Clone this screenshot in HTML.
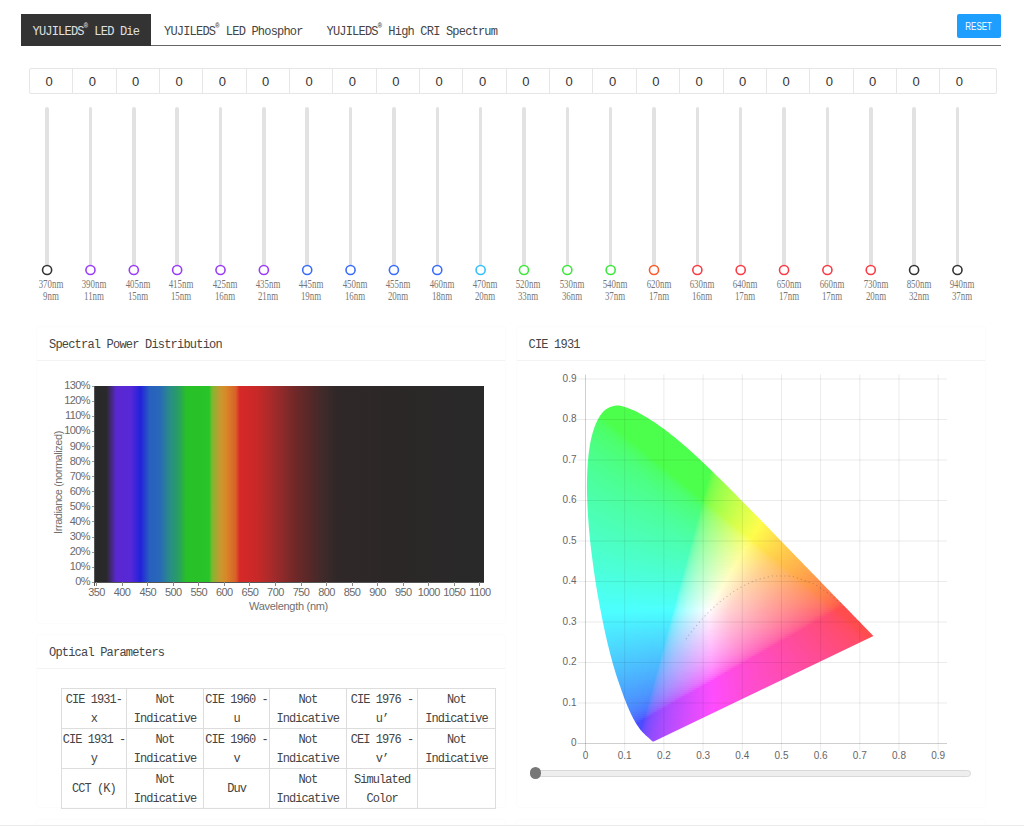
<!DOCTYPE html><html><head><meta charset="utf-8"><title>YUJILEDS</title><style>
*{margin:0;padding:0;box-sizing:border-box}
html,body{width:1024px;height:826px;overflow:hidden;background:#fff}
body{position:relative;font-family:"Liberation Sans",sans-serif;color:#333}
.a{position:absolute}
.m{font-family:"Liberation Mono",monospace;letter-spacing:-0.8px;font-size:12px;white-space:nowrap}
.card{position:absolute;background:#fff;border-radius:2px;box-shadow:0 0 2px rgba(0,0,0,.05)}
.card .hd{position:absolute;left:0;right:0;top:0;border-bottom:1px solid #f3f3f3}
.card .tt{position:absolute;left:12px;color:#444}
.cell{position:absolute;top:0;height:26px;border:1px solid #e6e6e6;font-size:12.5px;line-height:24px;color:#333;padding-left:16px}
.trk{position:absolute;top:107px;height:158px;width:3.5px;background:#e2e2e2;border-radius:2px 2px 0 0}
.th{position:absolute;top:264.7px;width:10.6px;height:10.6px;border-radius:50%;border:1.7px solid #333;background:#fff}
.lb{position:absolute;width:44px;text-align:center;font-family:"Liberation Serif",serif;font-size:11.5px;letter-spacing:0;transform:scaleX(.77);line-height:12px;color:#777;white-space:nowrap}
.yl{position:absolute;right:0;font-size:11px;letter-spacing:-0.6px;color:#6a6a6a;line-height:11px;text-align:right}
.xl{position:absolute;font-size:11px;letter-spacing:-0.6px;color:#6a6a6a;line-height:11px;width:40px;text-align:center}
table{border-collapse:collapse;position:absolute}
td{border:1px solid #ddd;font-family:"Liberation Mono",monospace;font-size:12px;letter-spacing:-0.95px;line-height:19.5px;text-align:center;color:#444;padding:0;white-space:nowrap}
</style></head><body>
<div class="a" style="left:21px;top:14px;width:130px;height:32px;background:#333"></div>
<div class="a" style="left:151px;top:45px;width:850px;height:1px;background:#666"></div>
<div class="a m" style="left:32.5px;top:24px;line-height:16px;color:#e0e0e0">YUJILEDS<sup style="font-size:7px;position:relative;top:-3px;vertical-align:top;letter-spacing:0;line-height:10px">&reg;</sup> LED Die</div>
<div class="a m" style="left:164.0px;top:24px;line-height:16px;color:#444">YUJILEDS<sup style="font-size:7px;position:relative;top:-3px;vertical-align:top;letter-spacing:0;line-height:10px">&reg;</sup> LED Phosphor</div>
<div class="a m" style="left:326.5px;top:24px;line-height:16px;color:#444">YUJILEDS<sup style="font-size:7px;position:relative;top:-3px;vertical-align:top;letter-spacing:0;line-height:10px">&reg;</sup> High CRI Spectrum</div>
<div class="a" style="left:957px;top:14px;width:44px;height:24px;background:#1e9fff;border-radius:2px;color:#fff;font-size:10px;line-height:26px;text-align:center"><span style="display:inline-block;transform:scaleX(.8)">RESET</span></div>
<div class="a" style="left:29px;top:68px;width:968px;height:26px;border:1px solid #e6e6e6;border-radius:2px"></div>
<div class="a" style="left:72.25px;top:69px;width:1px;height:24px;background:#e6e6e6"></div>
<div class="a" style="left:115.60px;top:69px;width:1px;height:24px;background:#e6e6e6"></div>
<div class="a" style="left:158.95px;top:69px;width:1px;height:24px;background:#e6e6e6"></div>
<div class="a" style="left:202.30px;top:69px;width:1px;height:24px;background:#e6e6e6"></div>
<div class="a" style="left:245.65px;top:69px;width:1px;height:24px;background:#e6e6e6"></div>
<div class="a" style="left:289.00px;top:69px;width:1px;height:24px;background:#e6e6e6"></div>
<div class="a" style="left:332.35px;top:69px;width:1px;height:24px;background:#e6e6e6"></div>
<div class="a" style="left:375.70px;top:69px;width:1px;height:24px;background:#e6e6e6"></div>
<div class="a" style="left:419.05px;top:69px;width:1px;height:24px;background:#e6e6e6"></div>
<div class="a" style="left:462.40px;top:69px;width:1px;height:24px;background:#e6e6e6"></div>
<div class="a" style="left:505.75px;top:69px;width:1px;height:24px;background:#e6e6e6"></div>
<div class="a" style="left:549.10px;top:69px;width:1px;height:24px;background:#e6e6e6"></div>
<div class="a" style="left:592.45px;top:69px;width:1px;height:24px;background:#e6e6e6"></div>
<div class="a" style="left:635.80px;top:69px;width:1px;height:24px;background:#e6e6e6"></div>
<div class="a" style="left:679.15px;top:69px;width:1px;height:24px;background:#e6e6e6"></div>
<div class="a" style="left:722.50px;top:69px;width:1px;height:24px;background:#e6e6e6"></div>
<div class="a" style="left:765.85px;top:69px;width:1px;height:24px;background:#e6e6e6"></div>
<div class="a" style="left:809.20px;top:69px;width:1px;height:24px;background:#e6e6e6"></div>
<div class="a" style="left:852.55px;top:69px;width:1px;height:24px;background:#e6e6e6"></div>
<div class="a" style="left:895.90px;top:69px;width:1px;height:24px;background:#e6e6e6"></div>
<div class="a" style="left:939.25px;top:69px;width:1px;height:24px;background:#e6e6e6"></div>
<div class="a" style="left:45.4px;top:69px;font-size:13px;line-height:25px;color:#333">0</div>
<div class="a" style="left:88.8px;top:69px;font-size:13px;line-height:25px;color:#333">0</div>
<div class="a" style="left:132.1px;top:69px;font-size:13px;line-height:25px;color:#333">0</div>
<div class="a" style="left:175.5px;top:69px;font-size:13px;line-height:25px;color:#333">0</div>
<div class="a" style="left:218.8px;top:69px;font-size:13px;line-height:25px;color:#333">0</div>
<div class="a" style="left:262.1px;top:69px;font-size:13px;line-height:25px;color:#333">0</div>
<div class="a" style="left:305.5px;top:69px;font-size:13px;line-height:25px;color:#333">0</div>
<div class="a" style="left:348.8px;top:69px;font-size:13px;line-height:25px;color:#333">0</div>
<div class="a" style="left:392.2px;top:69px;font-size:13px;line-height:25px;color:#333">0</div>
<div class="a" style="left:435.6px;top:69px;font-size:13px;line-height:25px;color:#333">0</div>
<div class="a" style="left:478.9px;top:69px;font-size:13px;line-height:25px;color:#333">0</div>
<div class="a" style="left:522.2px;top:69px;font-size:13px;line-height:25px;color:#333">0</div>
<div class="a" style="left:565.6px;top:69px;font-size:13px;line-height:25px;color:#333">0</div>
<div class="a" style="left:609.0px;top:69px;font-size:13px;line-height:25px;color:#333">0</div>
<div class="a" style="left:652.3px;top:69px;font-size:13px;line-height:25px;color:#333">0</div>
<div class="a" style="left:695.6px;top:69px;font-size:13px;line-height:25px;color:#333">0</div>
<div class="a" style="left:739.0px;top:69px;font-size:13px;line-height:25px;color:#333">0</div>
<div class="a" style="left:782.4px;top:69px;font-size:13px;line-height:25px;color:#333">0</div>
<div class="a" style="left:825.7px;top:69px;font-size:13px;line-height:25px;color:#333">0</div>
<div class="a" style="left:869.0px;top:69px;font-size:13px;line-height:25px;color:#333">0</div>
<div class="a" style="left:912.4px;top:69px;font-size:13px;line-height:25px;color:#333">0</div>
<div class="a" style="left:955.8px;top:69px;font-size:13px;line-height:25px;color:#333">0</div>
<div class="trk" style="left:45.35px"></div>
<div class="lb" style="left:29.0px;top:278.3px">370nm<br>9nm</div>
<div class="trk" style="left:88.70px"></div>
<div class="lb" style="left:72.4px;top:278.3px">390nm<br>11nm</div>
<div class="trk" style="left:132.05px"></div>
<div class="lb" style="left:115.8px;top:278.3px">405nm<br>15nm</div>
<div class="trk" style="left:175.40px"></div>
<div class="lb" style="left:159.2px;top:278.3px">415nm<br>15nm</div>
<div class="trk" style="left:218.75px"></div>
<div class="lb" style="left:202.6px;top:278.3px">425nm<br>16nm</div>
<div class="trk" style="left:262.10px"></div>
<div class="lb" style="left:246.0px;top:278.3px">435nm<br>21nm</div>
<div class="trk" style="left:305.45px"></div>
<div class="lb" style="left:289.4px;top:278.3px">445nm<br>19nm</div>
<div class="trk" style="left:348.80px"></div>
<div class="lb" style="left:332.8px;top:278.3px">450nm<br>16nm</div>
<div class="trk" style="left:392.15px"></div>
<div class="lb" style="left:376.2px;top:278.3px">455nm<br>20nm</div>
<div class="trk" style="left:435.50px"></div>
<div class="lb" style="left:419.6px;top:278.3px">460nm<br>18nm</div>
<div class="trk" style="left:478.85px"></div>
<div class="lb" style="left:463.0px;top:278.3px">470nm<br>20nm</div>
<div class="trk" style="left:522.20px"></div>
<div class="lb" style="left:506.4px;top:278.3px">520nm<br>33nm</div>
<div class="trk" style="left:565.55px"></div>
<div class="lb" style="left:549.8px;top:278.3px">530nm<br>36nm</div>
<div class="trk" style="left:608.90px"></div>
<div class="lb" style="left:593.2px;top:278.3px">540nm<br>37nm</div>
<div class="trk" style="left:652.25px"></div>
<div class="lb" style="left:636.6px;top:278.3px">620nm<br>17nm</div>
<div class="trk" style="left:695.60px"></div>
<div class="lb" style="left:680.0px;top:278.3px">630nm<br>16nm</div>
<div class="trk" style="left:738.95px"></div>
<div class="lb" style="left:723.4px;top:278.3px">640nm<br>17nm</div>
<div class="trk" style="left:782.30px"></div>
<div class="lb" style="left:766.8px;top:278.3px">650nm<br>17nm</div>
<div class="trk" style="left:825.65px"></div>
<div class="lb" style="left:810.2px;top:278.3px">660nm<br>17nm</div>
<div class="trk" style="left:869.00px"></div>
<div class="lb" style="left:853.6px;top:278.3px">730nm<br>20nm</div>
<div class="trk" style="left:912.35px"></div>
<div class="lb" style="left:897.0px;top:278.3px">850nm<br>32nm</div>
<div class="trk" style="left:955.70px"></div>
<div class="lb" style="left:940.4px;top:278.3px">940nm<br>37nm</div>
<svg class="a" style="left:0;top:0" width="1024" height="300"><circle cx="47.10" cy="270" r="4.55" fill="#fff" stroke="#333" stroke-width="1.6"/><circle cx="90.45" cy="270" r="4.55" fill="#fff" stroke="#9a3cf8" stroke-width="1.6"/><circle cx="133.80" cy="270" r="4.55" fill="#fff" stroke="#9a3cf8" stroke-width="1.6"/><circle cx="177.15" cy="270" r="4.55" fill="#fff" stroke="#9a3cf8" stroke-width="1.6"/><circle cx="220.50" cy="270" r="4.55" fill="#fff" stroke="#9a3cf8" stroke-width="1.6"/><circle cx="263.85" cy="270" r="4.55" fill="#fff" stroke="#9a3cf8" stroke-width="1.6"/><circle cx="307.20" cy="270" r="4.55" fill="#fff" stroke="#3a6cfc" stroke-width="1.6"/><circle cx="350.55" cy="270" r="4.55" fill="#fff" stroke="#3a6cfc" stroke-width="1.6"/><circle cx="393.90" cy="270" r="4.55" fill="#fff" stroke="#3a6cfc" stroke-width="1.6"/><circle cx="437.25" cy="270" r="4.55" fill="#fff" stroke="#3a6cfc" stroke-width="1.6"/><circle cx="480.60" cy="270" r="4.55" fill="#fff" stroke="#35c0fc" stroke-width="1.6"/><circle cx="523.95" cy="270" r="4.55" fill="#fff" stroke="#3ce83c" stroke-width="1.6"/><circle cx="567.30" cy="270" r="4.55" fill="#fff" stroke="#3ce83c" stroke-width="1.6"/><circle cx="610.65" cy="270" r="4.55" fill="#fff" stroke="#3ce83c" stroke-width="1.6"/><circle cx="654.00" cy="270" r="4.55" fill="#fff" stroke="#fc5a2a" stroke-width="1.6"/><circle cx="697.35" cy="270" r="4.55" fill="#fff" stroke="#fc3a44" stroke-width="1.6"/><circle cx="740.70" cy="270" r="4.55" fill="#fff" stroke="#fc3a44" stroke-width="1.6"/><circle cx="784.05" cy="270" r="4.55" fill="#fff" stroke="#fc3a44" stroke-width="1.6"/><circle cx="827.40" cy="270" r="4.55" fill="#fff" stroke="#fc3a44" stroke-width="1.6"/><circle cx="870.75" cy="270" r="4.55" fill="#fff" stroke="#fc3a44" stroke-width="1.6"/><circle cx="914.10" cy="270" r="4.55" fill="#fff" stroke="#333" stroke-width="1.6"/><circle cx="957.45" cy="270" r="4.55" fill="#fff" stroke="#333" stroke-width="1.6"/></svg>
<div class="card" style="left:37.0px;top:327.0px;width:467.5px;height:296.0px"><div class="hd" style="height:34.0px"></div><div class="tt m" style="top:10.3px;line-height:16px">Spectral Power Distribution</div></div>
<div class="card" style="left:37.0px;top:634.5px;width:467.5px;height:172.5px"><div class="hd" style="height:34.0px"></div><div class="tt m" style="top:10.0px;line-height:16px">Optical Parameters</div></div>
<div class="card" style="left:516.5px;top:327.0px;width:468.5px;height:479.5px"><div class="hd" style="height:33.5px"></div><div class="tt m" style="top:10.0px;line-height:16px">CIE 1931</div></div>
<div class="card" style="left:37.0px;top:819.5px;width:467.5px;height:80.5px"><div class="hd" style="height:30.5px"></div><div class="tt m" style="top:0.0px;line-height:16px"></div></div>
<div class="card" style="left:516.5px;top:819.5px;width:468.5px;height:80.5px"><div class="hd" style="height:30.5px"></div><div class="tt m" style="top:0.0px;line-height:16px"></div></div>
<div class="a" style="left:0;top:824.5px;width:1024px;height:2px;background:#eaeaea"></div>
<div class="a" style="left:94.4px;top:386.2px;width:389.4px;height:196.0px;background:linear-gradient(to right,#292929 0.0px,#292929 12.1px,#5a28d0 22.3px,#5828d8 36.3px,#2222d8 46.5px,#2860c0 55.6px,#2868b8 65.6px,#288c88 75.4px,#28a060 85.1px,#28c028 92.0px,#28c428 114.9px,#80b830 118.3px,#c89830 126.1px,#d88828 132.0px,#d86028 141.8px,#d82828 145.6px,#c82828 163.3px,#b02a2a 174.0px,#902a2a 187.6px,#702828 201.3px,#582828 215.0px,#402a2a 228.6px,#302828 242.3px,#2b2727 305.6px,#292929 389.4px)"></div>
<div class="a" style="left:94.4px;top:386.2px;width:1px;height:200.0px;background:#555"></div>
<div class="a" style="left:92.4px;top:582.2px;width:391.4px;height:1px;background:#555"></div>
<div class="a" style="left:40px;top:0;width:50px;height:826px">
<div class="yl" style="top:576.2px">0%</div>
<div class="yl" style="top:561.1px">10%</div>
<div class="yl" style="top:546.0px">20%</div>
<div class="yl" style="top:531.0px">30%</div>
<div class="yl" style="top:515.9px">40%</div>
<div class="yl" style="top:500.8px">50%</div>
<div class="yl" style="top:485.7px">60%</div>
<div class="yl" style="top:470.7px">70%</div>
<div class="yl" style="top:455.6px">80%</div>
<div class="yl" style="top:440.5px">90%</div>
<div class="yl" style="top:425.4px">100%</div>
<div class="yl" style="top:410.4px">110%</div>
<div class="yl" style="top:395.3px">120%</div>
<div class="yl" style="top:380.2px">130%</div>
</div>
<div class="a" style="left:92.4px;top:581.7px;width:2px;height:1px;background:#999"></div>
<div class="a" style="left:92.4px;top:566.6px;width:2px;height:1px;background:#999"></div>
<div class="a" style="left:92.4px;top:551.5px;width:2px;height:1px;background:#999"></div>
<div class="a" style="left:92.4px;top:536.5px;width:2px;height:1px;background:#999"></div>
<div class="a" style="left:92.4px;top:521.4px;width:2px;height:1px;background:#999"></div>
<div class="a" style="left:92.4px;top:506.3px;width:2px;height:1px;background:#999"></div>
<div class="a" style="left:92.4px;top:491.2px;width:2px;height:1px;background:#999"></div>
<div class="a" style="left:92.4px;top:476.2px;width:2px;height:1px;background:#999"></div>
<div class="a" style="left:92.4px;top:461.1px;width:2px;height:1px;background:#999"></div>
<div class="a" style="left:92.4px;top:446.0px;width:2px;height:1px;background:#999"></div>
<div class="a" style="left:92.4px;top:430.9px;width:2px;height:1px;background:#999"></div>
<div class="a" style="left:92.4px;top:415.9px;width:2px;height:1px;background:#999"></div>
<div class="a" style="left:92.4px;top:400.8px;width:2px;height:1px;background:#999"></div>
<div class="a" style="left:92.4px;top:385.7px;width:2px;height:1px;background:#999"></div>
<div class="xl" style="left:76.6px;top:586.8px">350</div>
<div class="a" style="left:96.1px;top:582.2px;width:1px;height:4px;background:#888"></div>
<div class="xl" style="left:102.1px;top:586.8px">400</div>
<div class="a" style="left:121.6px;top:582.2px;width:1px;height:4px;background:#888"></div>
<div class="xl" style="left:127.7px;top:586.8px">450</div>
<div class="a" style="left:147.2px;top:582.2px;width:1px;height:4px;background:#888"></div>
<div class="xl" style="left:153.2px;top:586.8px">500</div>
<div class="a" style="left:172.8px;top:582.2px;width:1px;height:4px;background:#888"></div>
<div class="xl" style="left:178.8px;top:586.8px">550</div>
<div class="a" style="left:198.3px;top:582.2px;width:1px;height:4px;background:#888"></div>
<div class="xl" style="left:204.3px;top:586.8px">600</div>
<div class="a" style="left:223.8px;top:582.2px;width:1px;height:4px;background:#888"></div>
<div class="xl" style="left:229.9px;top:586.8px">650</div>
<div class="a" style="left:249.4px;top:582.2px;width:1px;height:4px;background:#888"></div>
<div class="xl" style="left:255.4px;top:586.8px">700</div>
<div class="a" style="left:274.9px;top:582.2px;width:1px;height:4px;background:#888"></div>
<div class="xl" style="left:281.0px;top:586.8px">750</div>
<div class="a" style="left:300.5px;top:582.2px;width:1px;height:4px;background:#888"></div>
<div class="xl" style="left:306.6px;top:586.8px">800</div>
<div class="a" style="left:326.1px;top:582.2px;width:1px;height:4px;background:#888"></div>
<div class="xl" style="left:332.1px;top:586.8px">850</div>
<div class="a" style="left:351.6px;top:582.2px;width:1px;height:4px;background:#888"></div>
<div class="xl" style="left:357.6px;top:586.8px">900</div>
<div class="a" style="left:377.1px;top:582.2px;width:1px;height:4px;background:#888"></div>
<div class="xl" style="left:383.2px;top:586.8px">950</div>
<div class="a" style="left:402.7px;top:582.2px;width:1px;height:4px;background:#888"></div>
<div class="xl" style="left:408.8px;top:586.8px">1000</div>
<div class="a" style="left:428.2px;top:582.2px;width:1px;height:4px;background:#888"></div>
<div class="xl" style="left:434.3px;top:586.8px">1050</div>
<div class="a" style="left:453.8px;top:582.2px;width:1px;height:4px;background:#888"></div>
<div class="xl" style="left:459.9px;top:586.8px">1100</div>
<div class="a" style="left:479.4px;top:582.2px;width:1px;height:4px;background:#888"></div>
<div class="a" style="left:248px;top:601px;width:81px;font-size:11px;letter-spacing:-0.3px;color:#707070;line-height:11px;text-align:center;white-space:nowrap">Wavelength (nm)</div>
<div class="a" style="left:4px;top:476.5px;width:108px;font-size:11px;letter-spacing:-0.45px;color:#707070;line-height:11px;text-align:center;white-space:nowrap;transform:rotate(-90deg)">Irradiance (normalized)</div>
<table style="left:61px;top:688px">
<tr style="height:39.6px">
<td style="width:64.9px"><div style="position:relative;top:1.5px">CIE 1931-<br>x</div></td>
<td style="width:77.2px"><div style="position:relative;top:1.5px">Not<br>Indicative</div></td>
<td style="width:65.9px"><div style="position:relative;top:1.5px">CIE 1960 -<br>u</div></td>
<td style="width:76.7px"><div style="position:relative;top:1.5px">Not<br>Indicative</div></td>
<td style="width:71.8px"><div style="position:relative;top:1.5px">CIE 1976 -<br>u&rsquo;</div></td>
<td style="width:77.1px"><div style="position:relative;top:1.5px">Not<br>Indicative</div></td>
</tr>
<tr style="height:39.6px">
<td style="width:64.9px"><div style="position:relative;top:1.5px">CIE 1931 -<br>y</div></td>
<td style="width:77.2px"><div style="position:relative;top:1.5px">Not<br>Indicative</div></td>
<td style="width:65.9px"><div style="position:relative;top:1.5px">CIE 1960 -<br>v</div></td>
<td style="width:76.7px"><div style="position:relative;top:1.5px">Not<br>Indicative</div></td>
<td style="width:71.8px"><div style="position:relative;top:1.5px">CEI 1976 -<br>v&rsquo;</div></td>
<td style="width:77.1px"><div style="position:relative;top:1.5px">Not<br>Indicative</div></td>
</tr>
<tr style="height:39.6px">
<td style="width:64.9px"><div style="position:relative;top:1.5px">CCT (K)</div></td>
<td style="width:77.2px"><div style="position:relative;top:1.5px">Not<br>Indicative</div></td>
<td style="width:65.9px"><div style="position:relative;top:1.5px">Duv</div></td>
<td style="width:76.7px"><div style="position:relative;top:1.5px">Not<br>Indicative</div></td>
<td style="width:71.8px"><div style="position:relative;top:1.5px">Simulated<br>Color</div></td>
<td style="width:77.1px"><div style="position:relative;top:1.5px"></div></td>
</tr>
</table>
<svg class="a" style="left:0;top:0" width="1024" height="826" viewBox="0 0 1024 826"><defs><clipPath id="hs"><path d="M653.73,741.48 L653.73,741.47 L653.72,741.47 L653.72,741.47 L653.72,741.47 L653.71,741.47 L653.70,741.47 L653.70,741.47 L653.69,741.48 L653.68,741.48 L653.67,741.48 L653.66,741.49 L653.65,741.50 L653.64,741.50 L653.63,741.51 L653.62,741.51 L653.61,741.52 L653.60,741.52 L653.59,741.52 L653.58,741.52 L653.58,741.52 L653.57,741.51 L653.56,741.51 L653.55,741.51 L653.53,741.52 L653.52,741.52 L653.51,741.52 L653.49,741.53 L653.48,741.54 L653.46,741.54 L653.45,741.55 L653.43,741.55 L653.42,741.56 L653.40,741.56 L653.39,741.56 L653.37,741.56 L653.36,741.56 L653.35,741.56 L653.33,741.56 L653.32,741.56 L653.30,741.56 L653.28,741.56 L653.26,741.56 L653.24,741.56 L653.23,741.56 L653.21,741.56 L653.18,741.56 L653.16,741.56 L653.14,741.56 L653.12,741.56 L653.10,741.56 L653.07,741.56 L653.05,741.56 L653.03,741.56 L653.00,741.56 L652.97,741.56 L652.95,741.56 L652.92,741.55 L652.89,741.54 L652.86,741.53 L652.82,741.51 L652.79,741.50 L652.75,741.48 L652.71,741.46 L652.67,741.43 L652.63,741.41 L652.58,741.38 L652.53,741.35 L652.47,741.31 L652.42,741.28 L652.36,741.24 L652.30,741.20 L652.24,741.15 L652.18,741.10 L652.12,741.06 L652.05,741.01 L651.99,740.95 L651.92,740.90 L651.85,740.84 L651.77,740.77 L651.69,740.71 L651.61,740.63 L651.52,740.56 L651.42,740.48 L651.33,740.39 L651.23,740.30 L651.12,740.21 L651.02,740.12 L650.91,740.02 L650.80,739.91 L650.68,739.81 L650.57,739.70 L650.45,739.58 L650.33,739.46 L650.20,739.34 L650.07,739.22 L649.93,739.09 L649.78,738.95 L649.64,738.82 L649.49,738.68 L649.33,738.54 L649.17,738.39 L649.00,738.24 L648.82,738.08 L648.64,737.91 L648.44,737.74 L648.24,737.56 L648.03,737.37 L647.81,737.17 L647.59,736.97 L647.35,736.77 L647.12,736.55 L646.87,736.33 L646.62,736.11 L646.37,735.88 L646.10,735.64 L645.84,735.40 L645.56,735.14 L645.27,734.88 L644.98,734.60 L644.68,734.31 L644.36,734.00 L644.04,733.69 L643.71,733.36 L643.38,733.02 L643.03,732.67 L642.67,732.29 L642.31,731.89 L641.93,731.47 L641.55,731.04 L641.17,730.60 L640.78,730.15 L640.38,729.68 L639.96,729.17 L639.53,728.62 L639.08,728.01 L638.60,727.34 L638.11,726.61 L637.59,725.85 L637.06,725.05 L636.52,724.19 L635.95,723.28 L635.36,722.29 L634.76,721.23 L634.13,720.09 L633.49,718.88 L632.83,717.63 L632.16,716.32 L631.46,714.93 L630.75,713.45 L630.01,711.87 L629.24,710.17 L628.45,708.35 L627.64,706.41 L626.80,704.39 L625.95,702.27 L625.06,700.04 L624.16,697.68 L623.23,695.19 L622.27,692.56 L621.28,689.76 L620.26,686.82 L619.19,683.75 L618.09,680.55 L616.97,677.21 L615.84,673.72 L614.70,670.06 L613.56,666.23 L612.42,662.22 L611.29,658.02 L610.15,653.64 L609.00,649.09 L607.84,644.38 L606.69,639.51 L605.54,634.49 L604.41,629.33 L603.29,624.02 L602.18,618.54 L601.05,612.85 L599.92,606.99 L598.81,600.99 L597.71,594.89 L596.66,588.72 L595.65,582.53 L594.71,576.36 L593.81,570.12 L592.93,563.77 L592.08,557.34 L591.28,550.87 L590.53,544.41 L589.85,537.99 L589.24,531.65 L588.71,525.45 L588.26,519.32 L587.86,513.20 L587.52,507.12 L587.25,501.11 L587.06,495.20 L586.95,489.41 L586.94,483.77 L587.03,478.31 L587.21,472.98 L587.48,467.73 L587.83,462.60 L588.27,457.61 L588.80,452.79 L589.42,448.17 L590.14,443.79 L590.95,439.67 L591.86,435.78 L592.89,432.08 L594.01,428.57 L595.22,425.29 L596.51,422.24 L597.87,419.44 L599.29,416.90 L600.74,414.64 L602.27,412.68 L603.89,411.01 L605.57,409.62 L607.32,408.47 L609.11,407.54 L610.93,406.80 L612.77,406.23 L614.62,405.81 L616.49,405.59 L618.40,405.62 L620.34,405.87 L622.31,406.28 L624.30,406.83 L626.29,407.48 L628.28,408.18 L630.25,408.89 L632.23,409.66 L634.23,410.54 L636.23,411.52 L638.23,412.58 L640.23,413.68 L642.22,414.82 L644.18,415.97 L646.13,417.11 L648.05,418.25 L649.95,419.43 L651.83,420.63 L653.71,421.85 L655.57,423.10 L657.42,424.37 L659.26,425.65 L661.10,426.95 L662.92,428.27 L664.74,429.61 L666.54,430.96 L668.34,432.34 L670.13,433.73 L671.91,435.14 L673.70,436.57 L675.48,438.01 L677.26,439.47 L679.04,440.95 L680.82,442.45 L682.60,443.96 L684.37,445.49 L686.14,447.04 L687.90,448.59 L689.67,450.16 L691.43,451.74 L693.19,453.33 L694.94,454.93 L696.69,456.55 L698.45,458.18 L700.20,459.82 L701.95,461.47 L703.70,463.12 L705.45,464.78 L707.20,466.45 L708.94,468.13 L710.69,469.82 L712.44,471.52 L714.19,473.22 L715.94,474.93 L717.69,476.65 L719.44,478.37 L721.19,480.10 L722.95,481.83 L724.71,483.57 L726.46,485.32 L728.21,487.07 L729.97,488.82 L731.72,490.58 L733.47,492.33 L735.21,494.10 L736.96,495.86 L738.70,497.63 L740.45,499.40 L742.19,501.17 L743.93,502.94 L745.67,504.71 L747.41,506.48 L749.15,508.25 L750.89,510.02 L752.63,511.79 L754.36,513.56 L756.10,515.32 L757.82,517.09 L759.54,518.85 L761.26,520.60 L762.97,522.36 L764.68,524.11 L766.38,525.87 L768.08,527.61 L769.78,529.36 L771.46,531.09 L773.14,532.82 L774.82,534.54 L776.48,536.26 L778.15,537.97 L779.80,539.68 L781.45,541.38 L783.09,543.07 L784.73,544.76 L786.35,546.43 L787.96,548.09 L789.57,549.75 L791.17,551.39 L792.76,553.03 L794.34,554.66 L795.91,556.28 L797.46,557.88 L799.01,559.47 L800.54,561.04 L802.06,562.61 L803.58,564.16 L805.08,565.70 L806.56,567.22 L808.03,568.73 L809.49,570.22 L810.92,571.70 L812.34,573.16 L813.74,574.61 L815.13,576.05 L816.50,577.47 L817.86,578.86 L819.19,580.24 L820.49,581.59 L821.78,582.92 L823.03,584.21 L824.26,585.48 L825.47,586.72 L826.66,587.94 L827.82,589.14 L828.97,590.33 L830.10,591.49 L831.22,592.64 L832.32,593.77 L833.41,594.89 L834.48,595.99 L835.53,597.08 L836.57,598.14 L837.58,599.18 L838.57,600.19 L839.53,601.18 L840.47,602.14 L841.38,603.08 L842.28,603.99 L843.15,604.88 L844.00,605.75 L844.83,606.59 L845.64,607.42 L846.43,608.23 L847.20,609.02 L847.95,609.79 L848.67,610.55 L849.38,611.28 L850.07,611.99 L850.74,612.69 L851.39,613.36 L852.03,614.02 L852.65,614.66 L853.25,615.28 L853.83,615.88 L854.39,616.46 L854.94,617.03 L855.47,617.58 L855.99,618.12 L856.50,618.64 L856.99,619.15 L857.47,619.63 L857.93,620.11 L858.38,620.56 L858.82,621.01 L859.24,621.44 L859.66,621.87 L860.07,622.28 L860.46,622.69 L860.84,623.08 L861.21,623.46 L861.57,623.84 L861.92,624.20 L862.26,624.55 L862.60,624.90 L862.93,625.24 L863.25,625.58 L863.57,625.90 L863.88,626.22 L864.18,626.53 L864.47,626.84 L864.76,627.14 L865.04,627.43 L865.32,627.71 L865.58,627.99 L865.85,628.26 L866.10,628.52 L866.35,628.78 L866.59,629.03 L866.82,629.27 L867.05,629.51 L867.28,629.74 L867.49,629.96 L867.70,630.17 L867.91,630.38 L868.11,630.58 L868.30,630.77 L868.49,630.96 L868.67,631.14 L868.84,631.31 L869.01,631.48 L869.16,631.63 L869.30,631.78 L869.43,631.92 L869.57,632.06 L869.71,632.21 L869.86,632.36 L870.02,632.53 L870.20,632.72 L870.40,632.93 L870.61,633.14 L870.83,633.37 L871.04,633.58 L871.24,633.79 L871.43,633.98 L871.59,634.15 L871.72,634.29 L871.84,634.42 L871.95,634.52 L872.04,634.62 L872.13,634.71 L872.21,634.79 L872.29,634.88 L872.37,634.96 L872.45,635.04 L872.53,635.12 L872.60,635.19 L872.66,635.26 L872.73,635.33 L872.79,635.39 L872.85,635.46 L872.92,635.53 L872.99,635.60 L873.06,635.67 L873.14,635.75 L873.21,635.83 L873.28,635.90 L873.34,635.96 L873.39,636.01 L873.43,636.05Z"/></clipPath><linearGradient id="g0" gradientUnits="userSpaceOnUse" x1="586" x2="875"><stop offset="0.002" stop-color="#00ff01"/><stop offset="0.493" stop-color="#00ff00"/><stop offset="0.500" stop-color="#1fff00"/><stop offset="0.521" stop-color="#47ff00"/><stop offset="0.576" stop-color="#7bff00"/><stop offset="0.708" stop-color="#c6ff00"/><stop offset="0.846" stop-color="#fffc00"/><stop offset="1.002" stop-color="#ffca00"/></linearGradient><linearGradient id="g1" gradientUnits="userSpaceOnUse" x1="586" x2="875"><stop offset="0.002" stop-color="#00ff0e"/><stop offset="0.016" stop-color="#00ff00"/><stop offset="0.490" stop-color="#00ff00"/><stop offset="0.493" stop-color="#08ff00"/><stop offset="0.500" stop-color="#25ff00"/><stop offset="0.524" stop-color="#4eff00"/><stop offset="0.587" stop-color="#84ff00"/><stop offset="0.735" stop-color="#d4ff00"/><stop offset="0.843" stop-color="#fffb00"/><stop offset="1.002" stop-color="#ffc900"/></linearGradient><linearGradient id="g2" gradientUnits="userSpaceOnUse" x1="586" x2="875"><stop offset="0.002" stop-color="#00ff17"/><stop offset="0.022" stop-color="#00ff00"/><stop offset="0.490" stop-color="#00ff00"/><stop offset="0.497" stop-color="#20ff00"/><stop offset="0.517" stop-color="#48ff00"/><stop offset="0.573" stop-color="#7cff00"/><stop offset="0.704" stop-color="#c7ff00"/><stop offset="0.839" stop-color="#fffb00"/><stop offset="1.002" stop-color="#ffc700"/></linearGradient><linearGradient id="g3" gradientUnits="userSpaceOnUse" x1="586" x2="875"><stop offset="0.002" stop-color="#00ff1d"/><stop offset="0.033" stop-color="#00ff00"/><stop offset="0.486" stop-color="#00ff00"/><stop offset="0.497" stop-color="#26ff00"/><stop offset="0.521" stop-color="#4fff00"/><stop offset="0.583" stop-color="#85ff00"/><stop offset="0.732" stop-color="#d6ff00"/><stop offset="0.836" stop-color="#fffb00"/><stop offset="1.002" stop-color="#ffc600"/></linearGradient><linearGradient id="g4" gradientUnits="userSpaceOnUse" x1="586" x2="875"><stop offset="0.002" stop-color="#00ff23"/><stop offset="0.029" stop-color="#00ff0b"/><stop offset="0.040" stop-color="#00ff00"/><stop offset="0.486" stop-color="#00ff00"/><stop offset="0.490" stop-color="#15ff00"/><stop offset="0.503" stop-color="#39ff00"/><stop offset="0.542" stop-color="#66ff00"/><stop offset="0.635" stop-color="#a7ff00"/><stop offset="0.825" stop-color="#fffe00"/><stop offset="1.002" stop-color="#ffc500"/></linearGradient><linearGradient id="g5" gradientUnits="userSpaceOnUse" x1="586" x2="875"><stop offset="0.002" stop-color="#00ff27"/><stop offset="0.036" stop-color="#00ff0d"/><stop offset="0.047" stop-color="#00ff00"/><stop offset="0.483" stop-color="#00ff00"/><stop offset="0.493" stop-color="#27ff00"/><stop offset="0.517" stop-color="#4fff00"/><stop offset="0.580" stop-color="#86ff00"/><stop offset="0.728" stop-color="#d7ff00"/><stop offset="0.825" stop-color="#fffc00"/><stop offset="1.002" stop-color="#ffc300"/></linearGradient><linearGradient id="g6" gradientUnits="userSpaceOnUse" x1="586" x2="875"><stop offset="0.002" stop-color="#00ff2c"/><stop offset="0.043" stop-color="#00ff0f"/><stop offset="0.057" stop-color="#00ff00"/><stop offset="0.483" stop-color="#00ff00"/><stop offset="0.486" stop-color="#16ff00"/><stop offset="0.500" stop-color="#39ff00"/><stop offset="0.538" stop-color="#67ff00"/><stop offset="0.631" stop-color="#a8ff00"/><stop offset="0.818" stop-color="#fffd00"/><stop offset="1.002" stop-color="#ffc200"/></linearGradient><linearGradient id="g7" gradientUnits="userSpaceOnUse" x1="586" x2="875"><stop offset="0.002" stop-color="#00ff30"/><stop offset="0.050" stop-color="#00ff11"/><stop offset="0.064" stop-color="#00ff00"/><stop offset="0.479" stop-color="#00ff00"/><stop offset="0.490" stop-color="#28ff00"/><stop offset="0.514" stop-color="#50ff00"/><stop offset="0.576" stop-color="#87ff00"/><stop offset="0.725" stop-color="#d9ff00"/><stop offset="0.818" stop-color="#fffb00"/><stop offset="1.002" stop-color="#ffc100"/></linearGradient><linearGradient id="g8" gradientUnits="userSpaceOnUse" x1="586" x2="875"><stop offset="0.002" stop-color="#00ff33"/><stop offset="0.057" stop-color="#00ff13"/><stop offset="0.074" stop-color="#00ff00"/><stop offset="0.479" stop-color="#02ff00"/><stop offset="0.483" stop-color="#18ff00"/><stop offset="0.497" stop-color="#3aff00"/><stop offset="0.538" stop-color="#6bff00"/><stop offset="0.638" stop-color="#afff00"/><stop offset="0.811" stop-color="#fffd00"/><stop offset="0.995" stop-color="#ffc100"/><stop offset="1.002" stop-color="#ffbf00"/></linearGradient><linearGradient id="g9" gradientUnits="userSpaceOnUse" x1="586" x2="875"><stop offset="0.002" stop-color="#00ff37"/><stop offset="0.061" stop-color="#00ff18"/><stop offset="0.081" stop-color="#00ff00"/><stop offset="0.476" stop-color="#00ff00"/><stop offset="0.486" stop-color="#29ff00"/><stop offset="0.510" stop-color="#51ff00"/><stop offset="0.573" stop-color="#88ff00"/><stop offset="0.721" stop-color="#dbff00"/><stop offset="0.811" stop-color="#fffb00"/><stop offset="0.998" stop-color="#ffbf00"/><stop offset="1.002" stop-color="#ffbe00"/></linearGradient><linearGradient id="g10" gradientUnits="userSpaceOnUse" x1="586" x2="875"><stop offset="0.002" stop-color="#00ff3a"/><stop offset="0.067" stop-color="#00ff19"/><stop offset="0.092" stop-color="#00ff00"/><stop offset="0.476" stop-color="#04ff00"/><stop offset="0.479" stop-color="#19ff00"/><stop offset="0.493" stop-color="#3bff00"/><stop offset="0.535" stop-color="#6cff00"/><stop offset="0.635" stop-color="#b0ff00"/><stop offset="0.804" stop-color="#fffc00"/><stop offset="0.988" stop-color="#ffc000"/><stop offset="1.002" stop-color="#ffbd00"/></linearGradient><linearGradient id="g11" gradientUnits="userSpaceOnUse" x1="586" x2="875"><stop offset="0.002" stop-color="#00ff3d"/><stop offset="0.074" stop-color="#00ff1b"/><stop offset="0.099" stop-color="#00ff00"/><stop offset="0.472" stop-color="#00ff00"/><stop offset="0.483" stop-color="#2aff00"/><stop offset="0.507" stop-color="#52ff00"/><stop offset="0.569" stop-color="#89ff00"/><stop offset="0.718" stop-color="#dcff00"/><stop offset="0.801" stop-color="#fffc00"/><stop offset="0.984" stop-color="#ffc000"/><stop offset="1.002" stop-color="#ffbb00"/></linearGradient><linearGradient id="g12" gradientUnits="userSpaceOnUse" x1="586" x2="875"><stop offset="0.002" stop-color="#00ff40"/><stop offset="0.078" stop-color="#00ff1f"/><stop offset="0.106" stop-color="#00ff00"/><stop offset="0.469" stop-color="#00ff00"/><stop offset="0.472" stop-color="#06ff00"/><stop offset="0.476" stop-color="#1aff00"/><stop offset="0.490" stop-color="#3cff00"/><stop offset="0.531" stop-color="#6dff00"/><stop offset="0.631" stop-color="#b2ff00"/><stop offset="0.794" stop-color="#fffd00"/><stop offset="0.974" stop-color="#ffc100"/><stop offset="1.002" stop-color="#ffba00"/></linearGradient><linearGradient id="g13" gradientUnits="userSpaceOnUse" x1="586" x2="875"><stop offset="0.002" stop-color="#00ff43"/><stop offset="0.085" stop-color="#00ff20"/><stop offset="0.109" stop-color="#00ff05"/><stop offset="0.119" stop-color="#00ff00"/><stop offset="0.469" stop-color="#00ff00"/><stop offset="0.476" stop-color="#21ff00"/><stop offset="0.493" stop-color="#45ff00"/><stop offset="0.542" stop-color="#78ff00"/><stop offset="0.656" stop-color="#c1ff00"/><stop offset="0.794" stop-color="#fffb00"/><stop offset="0.974" stop-color="#ffc000"/><stop offset="1.002" stop-color="#ffb900"/></linearGradient><linearGradient id="g14" gradientUnits="userSpaceOnUse" x1="586" x2="875"><stop offset="0.002" stop-color="#00ff46"/><stop offset="0.092" stop-color="#00ff21"/><stop offset="0.116" stop-color="#00ff08"/><stop offset="0.126" stop-color="#00ff00"/><stop offset="0.465" stop-color="#00ff00"/><stop offset="0.469" stop-color="#08ff00"/><stop offset="0.476" stop-color="#27ff00"/><stop offset="0.497" stop-color="#4dff00"/><stop offset="0.552" stop-color="#82ff00"/><stop offset="0.683" stop-color="#d0ff00"/><stop offset="0.787" stop-color="#fffc00"/><stop offset="0.964" stop-color="#ffc100"/><stop offset="1.002" stop-color="#ffb700"/></linearGradient><linearGradient id="g15" gradientUnits="userSpaceOnUse" x1="586" x2="875"><stop offset="0.002" stop-color="#00ff48"/><stop offset="0.095" stop-color="#00ff25"/><stop offset="0.123" stop-color="#00ff0b"/><stop offset="0.133" stop-color="#00ff00"/><stop offset="0.465" stop-color="#00ff00"/><stop offset="0.472" stop-color="#22ff00"/><stop offset="0.493" stop-color="#4bff00"/><stop offset="0.548" stop-color="#81ff00"/><stop offset="0.676" stop-color="#cfff00"/><stop offset="0.784" stop-color="#fffc00"/><stop offset="0.960" stop-color="#ffc000"/><stop offset="1.002" stop-color="#ffb600"/></linearGradient><linearGradient id="g16" gradientUnits="userSpaceOnUse" x1="586" x2="875"><stop offset="0.002" stop-color="#00ff4b"/><stop offset="0.102" stop-color="#00ff26"/><stop offset="0.130" stop-color="#00ff0d"/><stop offset="0.140" stop-color="#00ff00"/><stop offset="0.462" stop-color="#00ff00"/><stop offset="0.472" stop-color="#28ff00"/><stop offset="0.497" stop-color="#52ff00"/><stop offset="0.559" stop-color="#8bff00"/><stop offset="0.704" stop-color="#deff00"/><stop offset="0.780" stop-color="#fffc00"/><stop offset="0.957" stop-color="#ffc000"/><stop offset="1.002" stop-color="#ffb500"/></linearGradient><linearGradient id="g17" gradientUnits="userSpaceOnUse" x1="586" x2="875"><stop offset="0.002" stop-color="#00ff4d"/><stop offset="0.106" stop-color="#00ff29"/><stop offset="0.137" stop-color="#00ff10"/><stop offset="0.151" stop-color="#00ff00"/><stop offset="0.462" stop-color="#00ff00"/><stop offset="0.465" stop-color="#16ff00"/><stop offset="0.476" stop-color="#34ff00"/><stop offset="0.507" stop-color="#60ff00"/><stop offset="0.587" stop-color="#9fff00"/><stop offset="0.770" stop-color="#ffff00"/><stop offset="0.939" stop-color="#ffc300"/><stop offset="1.002" stop-color="#ffb300"/></linearGradient><linearGradient id="g18" gradientUnits="userSpaceOnUse" x1="586" x2="875"><stop offset="0.002" stop-color="#00ff50"/><stop offset="0.112" stop-color="#00ff2a"/><stop offset="0.147" stop-color="#00ff0d"/><stop offset="0.157" stop-color="#00ff00"/><stop offset="0.458" stop-color="#00ff00"/><stop offset="0.469" stop-color="#29ff00"/><stop offset="0.493" stop-color="#53ff00"/><stop offset="0.555" stop-color="#8cff00"/><stop offset="0.701" stop-color="#e0ff00"/><stop offset="0.773" stop-color="#fffb00"/><stop offset="0.946" stop-color="#ffc000"/><stop offset="1.002" stop-color="#ffb200"/></linearGradient><linearGradient id="g19" gradientUnits="userSpaceOnUse" x1="586" x2="875"><stop offset="0.002" stop-color="#00ff52"/><stop offset="0.116" stop-color="#00ff2d"/><stop offset="0.154" stop-color="#00ff0f"/><stop offset="0.164" stop-color="#00ff00"/><stop offset="0.458" stop-color="#00ff00"/><stop offset="0.462" stop-color="#17ff00"/><stop offset="0.476" stop-color="#3cff00"/><stop offset="0.514" stop-color="#6cff00"/><stop offset="0.607" stop-color="#b0ff00"/><stop offset="0.766" stop-color="#fffd00"/><stop offset="0.936" stop-color="#ffc100"/><stop offset="1.002" stop-color="#ffb100"/></linearGradient><linearGradient id="g20" gradientUnits="userSpaceOnUse" x1="586" x2="875"><stop offset="0.002" stop-color="#00ff55"/><stop offset="0.123" stop-color="#00ff2e"/><stop offset="0.161" stop-color="#00ff12"/><stop offset="0.171" stop-color="#00ff00"/><stop offset="0.455" stop-color="#00ff00"/><stop offset="0.465" stop-color="#2aff00"/><stop offset="0.490" stop-color="#54ff00"/><stop offset="0.552" stop-color="#8dff00"/><stop offset="0.697" stop-color="#e2ff00"/><stop offset="0.766" stop-color="#fffb00"/><stop offset="0.939" stop-color="#ffbf00"/><stop offset="1.002" stop-color="#ffaf00"/></linearGradient><linearGradient id="g21" gradientUnits="userSpaceOnUse" x1="586" x2="875"><stop offset="0.002" stop-color="#00ff57"/><stop offset="0.126" stop-color="#00ff31"/><stop offset="0.168" stop-color="#00ff14"/><stop offset="0.182" stop-color="#00ff00"/><stop offset="0.455" stop-color="#02ff00"/><stop offset="0.458" stop-color="#19ff00"/><stop offset="0.472" stop-color="#3dff00"/><stop offset="0.510" stop-color="#6dff00"/><stop offset="0.604" stop-color="#b1ff00"/><stop offset="0.760" stop-color="#fffc00"/><stop offset="0.929" stop-color="#ffc000"/><stop offset="1.002" stop-color="#ffae00"/></linearGradient><linearGradient id="g22" gradientUnits="userSpaceOnUse" x1="586" x2="875"><stop offset="0.002" stop-color="#00ff59"/><stop offset="0.133" stop-color="#00ff32"/><stop offset="0.175" stop-color="#00ff16"/><stop offset="0.189" stop-color="#00ff00"/><stop offset="0.452" stop-color="#00ff00"/><stop offset="0.462" stop-color="#2bff00"/><stop offset="0.486" stop-color="#55ff00"/><stop offset="0.548" stop-color="#8fff00"/><stop offset="0.697" stop-color="#e6ff00"/><stop offset="0.756" stop-color="#fffc00"/><stop offset="0.926" stop-color="#ffc000"/><stop offset="1.002" stop-color="#ffac00"/></linearGradient><linearGradient id="g23" gradientUnits="userSpaceOnUse" x1="586" x2="875"><stop offset="0.002" stop-color="#00ff5b"/><stop offset="0.137" stop-color="#00ff34"/><stop offset="0.185" stop-color="#00ff14"/><stop offset="0.199" stop-color="#00ff00"/><stop offset="0.452" stop-color="#04ff00"/><stop offset="0.455" stop-color="#1aff00"/><stop offset="0.469" stop-color="#3eff00"/><stop offset="0.507" stop-color="#6eff00"/><stop offset="0.600" stop-color="#b3ff00"/><stop offset="0.749" stop-color="#fffd00"/><stop offset="0.915" stop-color="#ffc100"/><stop offset="1.002" stop-color="#ffab00"/></linearGradient><linearGradient id="g24" gradientUnits="userSpaceOnUse" x1="586" x2="875"><stop offset="0.002" stop-color="#00ff5e"/><stop offset="0.144" stop-color="#00ff35"/><stop offset="0.192" stop-color="#00ff16"/><stop offset="0.206" stop-color="#00ff00"/><stop offset="0.448" stop-color="#00ff00"/><stop offset="0.455" stop-color="#22ff00"/><stop offset="0.472" stop-color="#47ff00"/><stop offset="0.521" stop-color="#7dff00"/><stop offset="0.635" stop-color="#c8ff00"/><stop offset="0.749" stop-color="#fffb00"/><stop offset="0.915" stop-color="#ffc000"/><stop offset="1.002" stop-color="#ffaa00"/></linearGradient><linearGradient id="g25" gradientUnits="userSpaceOnUse" x1="586" x2="875"><stop offset="0.002" stop-color="#00ff60"/><stop offset="0.147" stop-color="#00ff38"/><stop offset="0.199" stop-color="#00ff17"/><stop offset="0.216" stop-color="#00ff00"/><stop offset="0.445" stop-color="#00ff00"/><stop offset="0.448" stop-color="#06ff00"/><stop offset="0.452" stop-color="#1cff00"/><stop offset="0.465" stop-color="#3fff00"/><stop offset="0.503" stop-color="#6fff00"/><stop offset="0.597" stop-color="#b4ff00"/><stop offset="0.742" stop-color="#fffc00"/><stop offset="0.905" stop-color="#ffc100"/><stop offset="1.002" stop-color="#ffa800"/></linearGradient><linearGradient id="g26" gradientUnits="userSpaceOnUse" x1="586" x2="875"><stop offset="0.002" stop-color="#00ff62"/><stop offset="0.151" stop-color="#00ff3a"/><stop offset="0.206" stop-color="#00ff19"/><stop offset="0.223" stop-color="#00ff00"/><stop offset="0.445" stop-color="#00ff00"/><stop offset="0.452" stop-color="#23ff00"/><stop offset="0.469" stop-color="#48ff00"/><stop offset="0.517" stop-color="#7eff00"/><stop offset="0.631" stop-color="#caff00"/><stop offset="0.739" stop-color="#fffc00"/><stop offset="0.901" stop-color="#ffc000"/><stop offset="1.002" stop-color="#ffa700"/></linearGradient><linearGradient id="g27" gradientUnits="userSpaceOnUse" x1="586" x2="875"><stop offset="0.002" stop-color="#00ff64"/><stop offset="0.157" stop-color="#00ff3b"/><stop offset="0.213" stop-color="#00ff1b"/><stop offset="0.230" stop-color="#00ff00"/><stop offset="0.441" stop-color="#00ff00"/><stop offset="0.445" stop-color="#09ff00"/><stop offset="0.448" stop-color="#1dff00"/><stop offset="0.462" stop-color="#40ff00"/><stop offset="0.500" stop-color="#70ff00"/><stop offset="0.593" stop-color="#b6ff00"/><stop offset="0.735" stop-color="#fffc00"/><stop offset="0.898" stop-color="#ffc000"/><stop offset="1.002" stop-color="#ffa500"/></linearGradient><linearGradient id="g28" gradientUnits="userSpaceOnUse" x1="586" x2="875"><stop offset="0.002" stop-color="#00ff66"/><stop offset="0.161" stop-color="#00ff3e"/><stop offset="0.220" stop-color="#00ff1d"/><stop offset="0.240" stop-color="#00ff00"/><stop offset="0.441" stop-color="#00ff00"/><stop offset="0.448" stop-color="#24ff00"/><stop offset="0.465" stop-color="#49ff00"/><stop offset="0.514" stop-color="#7fff00"/><stop offset="0.628" stop-color="#ccff00"/><stop offset="0.732" stop-color="#fffb00"/><stop offset="0.894" stop-color="#ffbf00"/><stop offset="1.002" stop-color="#ffa400"/></linearGradient><linearGradient id="g29" gradientUnits="userSpaceOnUse" x1="586" x2="875"><stop offset="0.002" stop-color="#00ff68"/><stop offset="0.164" stop-color="#00ff40"/><stop offset="0.227" stop-color="#00ff1e"/><stop offset="0.247" stop-color="#00ff00"/><stop offset="0.438" stop-color="#00ff00"/><stop offset="0.448" stop-color="#2aff00"/><stop offset="0.469" stop-color="#51ff00"/><stop offset="0.524" stop-color="#8aff00"/><stop offset="0.656" stop-color="#ddff00"/><stop offset="0.728" stop-color="#fffb00"/><stop offset="0.888" stop-color="#ffc000"/><stop offset="1.002" stop-color="#ffa300"/></linearGradient><linearGradient id="g30" gradientUnits="userSpaceOnUse" x1="586" x2="875"><stop offset="0.002" stop-color="#00ff6a"/><stop offset="0.171" stop-color="#00ff41"/><stop offset="0.234" stop-color="#00ff20"/><stop offset="0.251" stop-color="#00ff0a"/><stop offset="0.258" stop-color="#00ff00"/><stop offset="0.438" stop-color="#00ff00"/><stop offset="0.441" stop-color="#17ff00"/><stop offset="0.452" stop-color="#37ff00"/><stop offset="0.483" stop-color="#65ff00"/><stop offset="0.559" stop-color="#a5ff00"/><stop offset="0.718" stop-color="#fffe00"/><stop offset="0.874" stop-color="#ffc200"/><stop offset="1.002" stop-color="#ffa100"/></linearGradient><linearGradient id="g31" gradientUnits="userSpaceOnUse" x1="586" x2="875"><stop offset="0.002" stop-color="#00ff6c"/><stop offset="0.175" stop-color="#00ff43"/><stop offset="0.240" stop-color="#00ff21"/><stop offset="0.261" stop-color="#00ff06"/><stop offset="0.272" stop-color="#00ff00"/><stop offset="0.434" stop-color="#00ff00"/><stop offset="0.445" stop-color="#2bff00"/><stop offset="0.465" stop-color="#52ff00"/><stop offset="0.521" stop-color="#8bff00"/><stop offset="0.652" stop-color="#dfff00"/><stop offset="0.718" stop-color="#fffc00"/><stop offset="0.874" stop-color="#ffc100"/><stop offset="1.002" stop-color="#ffa000"/></linearGradient><linearGradient id="g32" gradientUnits="userSpaceOnUse" x1="586" x2="875"><stop offset="0.002" stop-color="#00ff6e"/><stop offset="0.178" stop-color="#00ff45"/><stop offset="0.247" stop-color="#00ff23"/><stop offset="0.268" stop-color="#00ff09"/><stop offset="0.275" stop-color="#00ff00"/><stop offset="0.434" stop-color="#00ff00"/><stop offset="0.438" stop-color="#19ff00"/><stop offset="0.448" stop-color="#38ff00"/><stop offset="0.479" stop-color="#66ff00"/><stop offset="0.555" stop-color="#a6ff00"/><stop offset="0.711" stop-color="#fffe00"/><stop offset="0.863" stop-color="#ffc200"/><stop offset="1.002" stop-color="#ff9e00"/></linearGradient><linearGradient id="g33" gradientUnits="userSpaceOnUse" x1="586" x2="875"><stop offset="0.002" stop-color="#00ff70"/><stop offset="0.182" stop-color="#00ff48"/><stop offset="0.254" stop-color="#00ff24"/><stop offset="0.275" stop-color="#00ff0d"/><stop offset="0.282" stop-color="#00ff00"/><stop offset="0.431" stop-color="#00ff00"/><stop offset="0.441" stop-color="#2cff00"/><stop offset="0.465" stop-color="#58ff00"/><stop offset="0.524" stop-color="#92ff00"/><stop offset="0.666" stop-color="#ebff00"/><stop offset="0.711" stop-color="#fffc00"/><stop offset="0.867" stop-color="#ffc000"/><stop offset="1.002" stop-color="#ff9d00"/></linearGradient><linearGradient id="g34" gradientUnits="userSpaceOnUse" x1="586" x2="875"><stop offset="0.002" stop-color="#00ff72"/><stop offset="0.189" stop-color="#00ff49"/><stop offset="0.261" stop-color="#00ff26"/><stop offset="0.282" stop-color="#00ff10"/><stop offset="0.289" stop-color="#00ff00"/><stop offset="0.431" stop-color="#01ff00"/><stop offset="0.434" stop-color="#1aff00"/><stop offset="0.448" stop-color="#40ff00"/><stop offset="0.486" stop-color="#72ff00"/><stop offset="0.576" stop-color="#b8ff00"/><stop offset="0.704" stop-color="#fffd00"/><stop offset="0.856" stop-color="#ffc100"/><stop offset="1.002" stop-color="#ff9b00"/></linearGradient><linearGradient id="g35" gradientUnits="userSpaceOnUse" x1="586" x2="875"><stop offset="0.002" stop-color="#00ff74"/><stop offset="0.192" stop-color="#00ff4b"/><stop offset="0.268" stop-color="#00ff27"/><stop offset="0.292" stop-color="#00ff0c"/><stop offset="0.299" stop-color="#00ff00"/><stop offset="0.427" stop-color="#00ff00"/><stop offset="0.434" stop-color="#22ff00"/><stop offset="0.452" stop-color="#4aff00"/><stop offset="0.497" stop-color="#7fff00"/><stop offset="0.604" stop-color="#cbff00"/><stop offset="0.701" stop-color="#fffd00"/><stop offset="0.853" stop-color="#ffc100"/><stop offset="1.002" stop-color="#ff9a00"/></linearGradient><linearGradient id="g36" gradientUnits="userSpaceOnUse" x1="586" x2="875"><stop offset="0.002" stop-color="#00ff76"/><stop offset="0.196" stop-color="#00ff4d"/><stop offset="0.275" stop-color="#00ff29"/><stop offset="0.299" stop-color="#00ff0f"/><stop offset="0.306" stop-color="#00ff00"/><stop offset="0.427" stop-color="#04ff00"/><stop offset="0.431" stop-color="#1cff00"/><stop offset="0.445" stop-color="#41ff00"/><stop offset="0.483" stop-color="#74ff00"/><stop offset="0.573" stop-color="#baff00"/><stop offset="0.697" stop-color="#fffc00"/><stop offset="0.846" stop-color="#ffc100"/><stop offset="1.002" stop-color="#ff9800"/></linearGradient><linearGradient id="g37" gradientUnits="userSpaceOnUse" x1="586" x2="875"><stop offset="0.002" stop-color="#00ff78"/><stop offset="0.199" stop-color="#00ff4f"/><stop offset="0.282" stop-color="#00ff2a"/><stop offset="0.306" stop-color="#00ff12"/><stop offset="0.317" stop-color="#00ff00"/><stop offset="0.424" stop-color="#00ff00"/><stop offset="0.431" stop-color="#23ff00"/><stop offset="0.448" stop-color="#4bff00"/><stop offset="0.493" stop-color="#80ff00"/><stop offset="0.600" stop-color="#cdff00"/><stop offset="0.694" stop-color="#fffc00"/><stop offset="0.843" stop-color="#ffc100"/><stop offset="1.002" stop-color="#ff9700"/></linearGradient><linearGradient id="g38" gradientUnits="userSpaceOnUse" x1="586" x2="875"><stop offset="0.002" stop-color="#00ff7a"/><stop offset="0.206" stop-color="#00ff50"/><stop offset="0.289" stop-color="#00ff2c"/><stop offset="0.317" stop-color="#00ff0f"/><stop offset="0.324" stop-color="#00ff00"/><stop offset="0.420" stop-color="#00ff00"/><stop offset="0.424" stop-color="#07ff00"/><stop offset="0.427" stop-color="#1dff00"/><stop offset="0.441" stop-color="#42ff00"/><stop offset="0.479" stop-color="#75ff00"/><stop offset="0.569" stop-color="#bcff00"/><stop offset="0.690" stop-color="#fffc00"/><stop offset="0.839" stop-color="#ffc000"/><stop offset="1.002" stop-color="#ff9500"/></linearGradient><linearGradient id="g39" gradientUnits="userSpaceOnUse" x1="586" x2="875"><stop offset="0.002" stop-color="#00ff7b"/><stop offset="0.209" stop-color="#00ff52"/><stop offset="0.296" stop-color="#00ff2d"/><stop offset="0.324" stop-color="#00ff12"/><stop offset="0.334" stop-color="#00ff00"/><stop offset="0.420" stop-color="#00ff00"/><stop offset="0.427" stop-color="#25ff00"/><stop offset="0.445" stop-color="#4cff00"/><stop offset="0.490" stop-color="#81ff00"/><stop offset="0.597" stop-color="#cfff00"/><stop offset="0.687" stop-color="#fffb00"/><stop offset="0.836" stop-color="#ffbf00"/><stop offset="1.002" stop-color="#ff9400"/></linearGradient><linearGradient id="g40" gradientUnits="userSpaceOnUse" x1="586" x2="875"><stop offset="0.002" stop-color="#00ff7d"/><stop offset="0.213" stop-color="#00ff54"/><stop offset="0.303" stop-color="#00ff2e"/><stop offset="0.330" stop-color="#00ff14"/><stop offset="0.341" stop-color="#00ff00"/><stop offset="0.417" stop-color="#00ff00"/><stop offset="0.420" stop-color="#09ff00"/><stop offset="0.424" stop-color="#1fff00"/><stop offset="0.438" stop-color="#43ff00"/><stop offset="0.476" stop-color="#76ff00"/><stop offset="0.566" stop-color="#bdff00"/><stop offset="0.680" stop-color="#fffd00"/><stop offset="0.825" stop-color="#ffc100"/><stop offset="1.002" stop-color="#ff9200"/></linearGradient><linearGradient id="g41" gradientUnits="userSpaceOnUse" x1="586" x2="875"><stop offset="0.002" stop-color="#00ff7f"/><stop offset="0.216" stop-color="#00ff56"/><stop offset="0.310" stop-color="#00ff30"/><stop offset="0.341" stop-color="#00ff11"/><stop offset="0.348" stop-color="#00ff01"/><stop offset="0.417" stop-color="#00ff00"/><stop offset="0.420" stop-color="#17ff00"/><stop offset="0.431" stop-color="#39ff00"/><stop offset="0.462" stop-color="#69ff00"/><stop offset="0.538" stop-color="#acff00"/><stop offset="0.676" stop-color="#fffd00"/><stop offset="0.818" stop-color="#ffc100"/><stop offset="1.002" stop-color="#ff9100"/></linearGradient><linearGradient id="g42" gradientUnits="userSpaceOnUse" x1="586" x2="875"><stop offset="0.002" stop-color="#00ff81"/><stop offset="0.220" stop-color="#00ff58"/><stop offset="0.317" stop-color="#00ff31"/><stop offset="0.348" stop-color="#00ff14"/><stop offset="0.358" stop-color="#00ff00"/><stop offset="0.413" stop-color="#00ff00"/><stop offset="0.417" stop-color="#0cff00"/><stop offset="0.424" stop-color="#2cff00"/><stop offset="0.445" stop-color="#56ff00"/><stop offset="0.497" stop-color="#8eff00"/><stop offset="0.621" stop-color="#e4ff00"/><stop offset="0.673" stop-color="#fffc00"/><stop offset="0.815" stop-color="#ffc100"/><stop offset="1.002" stop-color="#ff8f00"/></linearGradient><linearGradient id="g43" gradientUnits="userSpaceOnUse" x1="586" x2="875"><stop offset="0.002" stop-color="#00ff83"/><stop offset="0.223" stop-color="#00ff5a"/><stop offset="0.320" stop-color="#00ff35"/><stop offset="0.355" stop-color="#00ff17"/><stop offset="0.365" stop-color="#00ff00"/><stop offset="0.413" stop-color="#00ff00"/><stop offset="0.417" stop-color="#19ff00"/><stop offset="0.427" stop-color="#3aff00"/><stop offset="0.458" stop-color="#6bff00"/><stop offset="0.535" stop-color="#aeff00"/><stop offset="0.666" stop-color="#fffe00"/><stop offset="0.804" stop-color="#ffc300"/><stop offset="1.002" stop-color="#ff8e00"/></linearGradient><linearGradient id="g44" gradientUnits="userSpaceOnUse" x1="586" x2="875"><stop offset="0.002" stop-color="#00ff85"/><stop offset="0.230" stop-color="#00ff5b"/><stop offset="0.330" stop-color="#00ff34"/><stop offset="0.365" stop-color="#00ff14"/><stop offset="0.375" stop-color="#00ff00"/><stop offset="0.410" stop-color="#00ff00"/><stop offset="0.420" stop-color="#2dff00"/><stop offset="0.441" stop-color="#57ff00"/><stop offset="0.493" stop-color="#8fff00"/><stop offset="0.618" stop-color="#e6ff00"/><stop offset="0.666" stop-color="#fffb00"/><stop offset="0.808" stop-color="#ffc000"/><stop offset="1.002" stop-color="#ff8c00"/></linearGradient><linearGradient id="g45" gradientUnits="userSpaceOnUse" x1="586" x2="875"><stop offset="0.002" stop-color="#00ff87"/><stop offset="0.234" stop-color="#00ff5d"/><stop offset="0.334" stop-color="#00ff37"/><stop offset="0.372" stop-color="#00ff16"/><stop offset="0.382" stop-color="#00ff00"/><stop offset="0.410" stop-color="#00ff00"/><stop offset="0.413" stop-color="#1aff00"/><stop offset="0.424" stop-color="#3bff00"/><stop offset="0.455" stop-color="#6cff00"/><stop offset="0.531" stop-color="#b0ff00"/><stop offset="0.659" stop-color="#fffd00"/><stop offset="0.798" stop-color="#ffc100"/><stop offset="1.002" stop-color="#ff8b00"/></linearGradient><linearGradient id="g46" gradientUnits="userSpaceOnUse" x1="586" x2="875"><stop offset="0.002" stop-color="#00ff89"/><stop offset="0.237" stop-color="#00ff5f"/><stop offset="0.341" stop-color="#00ff39"/><stop offset="0.379" stop-color="#00ff19"/><stop offset="0.393" stop-color="#00ff00"/><stop offset="0.407" stop-color="#00ff00"/><stop offset="0.417" stop-color="#2fff00"/><stop offset="0.438" stop-color="#58ff00"/><stop offset="0.493" stop-color="#94ff00"/><stop offset="0.625" stop-color="#efff00"/><stop offset="0.659" stop-color="#fffb00"/><stop offset="0.798" stop-color="#ffbf00"/><stop offset="1.002" stop-color="#ff8900"/></linearGradient><linearGradient id="g47" gradientUnits="userSpaceOnUse" x1="586" x2="875"><stop offset="0.002" stop-color="#00ff8a"/><stop offset="0.240" stop-color="#00ff61"/><stop offset="0.348" stop-color="#00ff3a"/><stop offset="0.386" stop-color="#00ff1b"/><stop offset="0.400" stop-color="#00ff00"/><stop offset="0.407" stop-color="#01ff00"/><stop offset="0.410" stop-color="#1cff00"/><stop offset="0.420" stop-color="#3dff00"/><stop offset="0.452" stop-color="#6dff00"/><stop offset="0.528" stop-color="#b2ff00"/><stop offset="0.652" stop-color="#fffc00"/><stop offset="0.787" stop-color="#ffc100"/><stop offset="1.002" stop-color="#ff8800"/></linearGradient><linearGradient id="g48" gradientUnits="userSpaceOnUse" x1="586" x2="875"><stop offset="0.002" stop-color="#00ff8c"/><stop offset="0.244" stop-color="#00ff63"/><stop offset="0.355" stop-color="#00ff3b"/><stop offset="0.396" stop-color="#00ff19"/><stop offset="0.403" stop-color="#00ff0c"/><stop offset="0.407" stop-color="#13ff02"/><stop offset="0.413" stop-color="#30ff00"/><stop offset="0.434" stop-color="#59ff00"/><stop offset="0.490" stop-color="#96ff00"/><stop offset="0.621" stop-color="#f1ff00"/><stop offset="0.652" stop-color="#fffa00"/><stop offset="0.791" stop-color="#ffbe00"/><stop offset="1.002" stop-color="#ff8600"/></linearGradient><linearGradient id="g49" gradientUnits="userSpaceOnUse" x1="586" x2="875"><stop offset="0.002" stop-color="#00ff8e"/><stop offset="0.247" stop-color="#00ff65"/><stop offset="0.362" stop-color="#00ff3d"/><stop offset="0.403" stop-color="#04ff1b"/><stop offset="0.407" stop-color="#1eff16"/><stop offset="0.417" stop-color="#3eff00"/><stop offset="0.448" stop-color="#6eff00"/><stop offset="0.524" stop-color="#b3ff00"/><stop offset="0.642" stop-color="#fffe00"/><stop offset="0.773" stop-color="#ffc200"/><stop offset="1.002" stop-color="#ff8400"/></linearGradient><linearGradient id="g50" gradientUnits="userSpaceOnUse" x1="586" x2="875"><stop offset="0.002" stop-color="#00ff90"/><stop offset="0.251" stop-color="#00ff67"/><stop offset="0.365" stop-color="#00ff40"/><stop offset="0.400" stop-color="#00ff29"/><stop offset="0.407" stop-color="#26ff22"/><stop offset="0.420" stop-color="#49ff0b"/><stop offset="0.424" stop-color="#4fff01"/><stop offset="0.469" stop-color="#87ff00"/><stop offset="0.573" stop-color="#d7ff00"/><stop offset="0.642" stop-color="#fffb00"/><stop offset="0.777" stop-color="#ffbf00"/><stop offset="1.002" stop-color="#ff8300"/></linearGradient><linearGradient id="g51" gradientUnits="userSpaceOnUse" x1="586" x2="875"><stop offset="0.002" stop-color="#00ff92"/><stop offset="0.254" stop-color="#00ff6a"/><stop offset="0.372" stop-color="#00ff41"/><stop offset="0.396" stop-color="#00ff33"/><stop offset="0.400" stop-color="#07ff30"/><stop offset="0.403" stop-color="#1fff2d"/><stop offset="0.417" stop-color="#46ff20"/><stop offset="0.434" stop-color="#62ff00"/><stop offset="0.497" stop-color="#a2ff00"/><stop offset="0.631" stop-color="#ffff00"/><stop offset="0.760" stop-color="#ffc300"/><stop offset="0.995" stop-color="#ff8300"/><stop offset="1.002" stop-color="#ff8100"/></linearGradient><linearGradient id="g52" gradientUnits="userSpaceOnUse" x1="586" x2="875"><stop offset="0.002" stop-color="#00ff94"/><stop offset="0.258" stop-color="#00ff6c"/><stop offset="0.379" stop-color="#00ff43"/><stop offset="0.396" stop-color="#00ff39"/><stop offset="0.403" stop-color="#27ff34"/><stop offset="0.420" stop-color="#50ff26"/><stop offset="0.438" stop-color="#6aff0a"/><stop offset="0.441" stop-color="#6eff00"/><stop offset="0.514" stop-color="#b2ff00"/><stop offset="0.631" stop-color="#fffd00"/><stop offset="0.760" stop-color="#ffc200"/><stop offset="0.998" stop-color="#ff8000"/><stop offset="1.002" stop-color="#ff7f00"/></linearGradient><linearGradient id="g53" gradientUnits="userSpaceOnUse" x1="586" x2="875"><stop offset="0.002" stop-color="#00ff95"/><stop offset="0.261" stop-color="#00ff6e"/><stop offset="0.386" stop-color="#00ff44"/><stop offset="0.393" stop-color="#00ff41"/><stop offset="0.396" stop-color="#0aff3f"/><stop offset="0.400" stop-color="#21ff3d"/><stop offset="0.413" stop-color="#47ff34"/><stop offset="0.441" stop-color="#71ff16"/><stop offset="0.452" stop-color="#7dff00"/><stop offset="0.542" stop-color="#c9ff00"/><stop offset="0.628" stop-color="#fffc00"/><stop offset="0.756" stop-color="#ffc100"/><stop offset="0.995" stop-color="#ff7f00"/><stop offset="1.002" stop-color="#ff7e00"/></linearGradient><linearGradient id="g54" gradientUnits="userSpaceOnUse" x1="586" x2="875"><stop offset="0.002" stop-color="#00ff97"/><stop offset="0.265" stop-color="#00ff70"/><stop offset="0.389" stop-color="#00ff47"/><stop offset="0.393" stop-color="#00ff46"/><stop offset="0.396" stop-color="#19ff44"/><stop offset="0.407" stop-color="#3dff3e"/><stop offset="0.434" stop-color="#6bff2a"/><stop offset="0.452" stop-color="#80ff12"/><stop offset="0.458" stop-color="#87ff00"/><stop offset="0.559" stop-color="#d7ff00"/><stop offset="0.625" stop-color="#fffc00"/><stop offset="0.753" stop-color="#ffc000"/><stop offset="0.991" stop-color="#ff7e00"/><stop offset="1.002" stop-color="#ff7c00"/></linearGradient><linearGradient id="g55" gradientUnits="userSpaceOnUse" x1="586" x2="875"><stop offset="0.002" stop-color="#00ff99"/><stop offset="0.268" stop-color="#00ff72"/><stop offset="0.389" stop-color="#00ff4c"/><stop offset="0.393" stop-color="#0dff4a"/><stop offset="0.396" stop-color="#22ff49"/><stop offset="0.410" stop-color="#49ff42"/><stop offset="0.448" stop-color="#7eff25"/><stop offset="0.462" stop-color="#8dff0e"/><stop offset="0.465" stop-color="#90ff03"/><stop offset="0.580" stop-color="#e8ff00"/><stop offset="0.621" stop-color="#fffb00"/><stop offset="0.749" stop-color="#ffc000"/><stop offset="0.988" stop-color="#ff7d00"/><stop offset="1.002" stop-color="#ff7a00"/></linearGradient><linearGradient id="g56" gradientUnits="userSpaceOnUse" x1="586" x2="875"><stop offset="0.002" stop-color="#00ff9b"/><stop offset="0.275" stop-color="#00ff73"/><stop offset="0.389" stop-color="#00ff51"/><stop offset="0.393" stop-color="#1bff4f"/><stop offset="0.403" stop-color="#3eff4a"/><stop offset="0.431" stop-color="#6dff3b"/><stop offset="0.465" stop-color="#93ff19"/><stop offset="0.476" stop-color="#9cff00"/><stop offset="0.607" stop-color="#fcff00"/><stop offset="0.753" stop-color="#ffbc00"/><stop offset="0.998" stop-color="#ff7900"/><stop offset="1.002" stop-color="#ff7800"/></linearGradient><linearGradient id="g57" gradientUnits="userSpaceOnUse" x1="586" x2="875"><stop offset="0.002" stop-color="#00ff9d"/><stop offset="0.279" stop-color="#00ff75"/><stop offset="0.386" stop-color="#00ff56"/><stop offset="0.396" stop-color="#30ff52"/><stop offset="0.417" stop-color="#5cff48"/><stop offset="0.465" stop-color="#95ff25"/><stop offset="0.479" stop-color="#a2ff0d"/><stop offset="0.483" stop-color="#a5ff01"/><stop offset="0.607" stop-color="#ffff00"/><stop offset="0.728" stop-color="#ffc300"/><stop offset="0.950" stop-color="#ff8300"/><stop offset="1.002" stop-color="#ff7700"/></linearGradient><linearGradient id="g58" gradientUnits="userSpaceOnUse" x1="586" x2="875"><stop offset="0.002" stop-color="#00ff9f"/><stop offset="0.282" stop-color="#00ff77"/><stop offset="0.386" stop-color="#00ff5a"/><stop offset="0.389" stop-color="#1cff59"/><stop offset="0.400" stop-color="#3fff55"/><stop offset="0.427" stop-color="#6eff48"/><stop offset="0.476" stop-color="#a1ff23"/><stop offset="0.493" stop-color="#b0ff00"/><stop offset="0.607" stop-color="#fffc00"/><stop offset="0.728" stop-color="#ffc100"/><stop offset="0.953" stop-color="#ff8000"/><stop offset="1.002" stop-color="#ff7500"/></linearGradient><linearGradient id="g59" gradientUnits="userSpaceOnUse" x1="586" x2="875"><stop offset="0.002" stop-color="#00ffa1"/><stop offset="0.285" stop-color="#00ff79"/><stop offset="0.382" stop-color="#00ff5f"/><stop offset="0.389" stop-color="#25ff5d"/><stop offset="0.403" stop-color="#4bff58"/><stop offset="0.441" stop-color="#82ff46"/><stop offset="0.483" stop-color="#aaff25"/><stop offset="0.497" stop-color="#b5ff0c"/><stop offset="0.500" stop-color="#b8ff00"/><stop offset="0.604" stop-color="#fffc00"/><stop offset="0.725" stop-color="#ffc100"/><stop offset="0.950" stop-color="#ff7f00"/><stop offset="1.002" stop-color="#ff7300"/></linearGradient><linearGradient id="g60" gradientUnits="userSpaceOnUse" x1="586" x2="875"><stop offset="0.002" stop-color="#00ffa2"/><stop offset="0.289" stop-color="#00ff7b"/><stop offset="0.382" stop-color="#01ff63"/><stop offset="0.386" stop-color="#1eff62"/><stop offset="0.396" stop-color="#41ff5e"/><stop offset="0.427" stop-color="#74ff52"/><stop offset="0.486" stop-color="#afff2b"/><stop offset="0.503" stop-color="#bdff11"/><stop offset="0.510" stop-color="#c3ff00"/><stop offset="0.600" stop-color="#fffb00"/><stop offset="0.721" stop-color="#ffc000"/><stop offset="0.946" stop-color="#ff7e00"/><stop offset="1.002" stop-color="#ff7100"/></linearGradient><linearGradient id="g61" gradientUnits="userSpaceOnUse" x1="586" x2="875"><stop offset="0.002" stop-color="#00ffa4"/><stop offset="0.292" stop-color="#00ff7d"/><stop offset="0.379" stop-color="#00ff68"/><stop offset="0.386" stop-color="#27ff66"/><stop offset="0.400" stop-color="#4dff61"/><stop offset="0.438" stop-color="#83ff52"/><stop offset="0.493" stop-color="#b7ff2e"/><stop offset="0.510" stop-color="#c5ff15"/><stop offset="0.517" stop-color="#cbff00"/><stop offset="0.597" stop-color="#fffb00"/><stop offset="0.718" stop-color="#ffbf00"/><stop offset="0.943" stop-color="#ff7d00"/><stop offset="1.002" stop-color="#ff6f00"/></linearGradient><linearGradient id="g62" gradientUnits="userSpaceOnUse" x1="586" x2="875"><stop offset="0.002" stop-color="#00ffa6"/><stop offset="0.296" stop-color="#00ff80"/><stop offset="0.379" stop-color="#04ff6b"/><stop offset="0.382" stop-color="#20ff6a"/><stop offset="0.393" stop-color="#42ff67"/><stop offset="0.424" stop-color="#75ff5c"/><stop offset="0.493" stop-color="#baff36"/><stop offset="0.517" stop-color="#cdff18"/><stop offset="0.524" stop-color="#d2ff04"/><stop offset="0.590" stop-color="#fffd00"/><stop offset="0.708" stop-color="#ffc100"/><stop offset="0.926" stop-color="#ff7f00"/><stop offset="1.002" stop-color="#ff6d00"/></linearGradient><linearGradient id="g63" gradientUnits="userSpaceOnUse" x1="586" x2="875"><stop offset="0.002" stop-color="#00ffa8"/><stop offset="0.299" stop-color="#00ff82"/><stop offset="0.375" stop-color="#00ff70"/><stop offset="0.382" stop-color="#28ff6e"/><stop offset="0.396" stop-color="#4eff6a"/><stop offset="0.434" stop-color="#85ff5c"/><stop offset="0.503" stop-color="#c5ff35"/><stop offset="0.528" stop-color="#d7ff15"/><stop offset="0.535" stop-color="#ddff00"/><stop offset="0.587" stop-color="#fffd00"/><stop offset="0.704" stop-color="#ffc000"/><stop offset="0.922" stop-color="#ff7e00"/><stop offset="1.002" stop-color="#ff6c00"/></linearGradient><linearGradient id="g64" gradientUnits="userSpaceOnUse" x1="586" x2="875"><stop offset="0.002" stop-color="#00ffaa"/><stop offset="0.303" stop-color="#00ff84"/><stop offset="0.372" stop-color="#00ff74"/><stop offset="0.375" stop-color="#07ff73"/><stop offset="0.379" stop-color="#22ff72"/><stop offset="0.389" stop-color="#43ff6f"/><stop offset="0.420" stop-color="#77ff66"/><stop offset="0.493" stop-color="#bfff44"/><stop offset="0.528" stop-color="#daff24"/><stop offset="0.538" stop-color="#e2ff10"/><stop offset="0.542" stop-color="#e4ff03"/><stop offset="0.583" stop-color="#fffc00"/><stop offset="0.697" stop-color="#ffc100"/><stop offset="0.908" stop-color="#ff8000"/><stop offset="1.002" stop-color="#ff6a00"/></linearGradient><linearGradient id="g65" gradientUnits="userSpaceOnUse" x1="586" x2="875"><stop offset="0.002" stop-color="#00ffac"/><stop offset="0.306" stop-color="#00ff86"/><stop offset="0.372" stop-color="#00ff78"/><stop offset="0.379" stop-color="#2aff76"/><stop offset="0.393" stop-color="#4fff72"/><stop offset="0.431" stop-color="#86ff66"/><stop offset="0.510" stop-color="#cfff3f"/><stop offset="0.542" stop-color="#e7ff1c"/><stop offset="0.552" stop-color="#efff00"/><stop offset="0.583" stop-color="#fff900"/><stop offset="0.701" stop-color="#ffbd00"/><stop offset="0.922" stop-color="#ff7b00"/><stop offset="1.002" stop-color="#ff6800"/></linearGradient><linearGradient id="g66" gradientUnits="userSpaceOnUse" x1="586" x2="875"><stop offset="0.002" stop-color="#00ffae"/><stop offset="0.310" stop-color="#00ff88"/><stop offset="0.369" stop-color="#00ff7c"/><stop offset="0.372" stop-color="#0bff7b"/><stop offset="0.375" stop-color="#23ff7a"/><stop offset="0.389" stop-color="#4cff77"/><stop offset="0.424" stop-color="#81ff6c"/><stop offset="0.507" stop-color="#cfff48"/><stop offset="0.545" stop-color="#ecff25"/><stop offset="0.555" stop-color="#f4ff0f"/><stop offset="0.559" stop-color="#f6ff01"/><stop offset="0.583" stop-color="#fff700"/><stop offset="0.701" stop-color="#ffbb00"/><stop offset="0.926" stop-color="#ff7800"/><stop offset="1.002" stop-color="#ff6600"/></linearGradient><linearGradient id="g67" gradientUnits="userSpaceOnUse" x1="586" x2="875"><stop offset="0.002" stop-color="#00ffb0"/><stop offset="0.313" stop-color="#00ff8a"/><stop offset="0.369" stop-color="#00ff7f"/><stop offset="0.372" stop-color="#1bff7e"/><stop offset="0.379" stop-color="#37ff7d"/><stop offset="0.400" stop-color="#63ff77"/><stop offset="0.452" stop-color="#a2ff67"/><stop offset="0.528" stop-color="#e2ff40"/><stop offset="0.555" stop-color="#f7ff22"/><stop offset="0.569" stop-color="#fffd00"/><stop offset="0.680" stop-color="#ffc200"/><stop offset="0.884" stop-color="#ff8000"/><stop offset="1.002" stop-color="#ff6400"/></linearGradient><linearGradient id="g68" gradientUnits="userSpaceOnUse" x1="586" x2="875"><stop offset="0.002" stop-color="#00ffb2"/><stop offset="0.317" stop-color="#00ff8d"/><stop offset="0.365" stop-color="#00ff83"/><stop offset="0.369" stop-color="#0eff82"/><stop offset="0.372" stop-color="#25ff81"/><stop offset="0.386" stop-color="#4eff7e"/><stop offset="0.420" stop-color="#83ff75"/><stop offset="0.503" stop-color="#d2ff55"/><stop offset="0.555" stop-color="#faff2e"/><stop offset="0.569" stop-color="#fffa18"/><stop offset="0.576" stop-color="#fff600"/><stop offset="0.694" stop-color="#ffba00"/><stop offset="0.919" stop-color="#ff7500"/><stop offset="1.002" stop-color="#ff6100"/></linearGradient><linearGradient id="g69" gradientUnits="userSpaceOnUse" x1="586" x2="875"><stop offset="0.002" stop-color="#00ffb4"/><stop offset="0.320" stop-color="#00ff8f"/><stop offset="0.365" stop-color="#00ff86"/><stop offset="0.369" stop-color="#1dff86"/><stop offset="0.379" stop-color="#42ff83"/><stop offset="0.407" stop-color="#74ff7d"/><stop offset="0.472" stop-color="#baff68"/><stop offset="0.545" stop-color="#f5ff41"/><stop offset="0.566" stop-color="#fffa2c"/><stop offset="0.580" stop-color="#fff012"/><stop offset="0.587" stop-color="#ffec00"/><stop offset="0.715" stop-color="#ffb000"/><stop offset="0.974" stop-color="#ff6600"/><stop offset="1.002" stop-color="#ff5f00"/></linearGradient><linearGradient id="g70" gradientUnits="userSpaceOnUse" x1="586" x2="875"><stop offset="0.002" stop-color="#00ffb6"/><stop offset="0.324" stop-color="#00ff91"/><stop offset="0.362" stop-color="#00ff8a"/><stop offset="0.372" stop-color="#34ff88"/><stop offset="0.393" stop-color="#63ff83"/><stop offset="0.441" stop-color="#a0ff77"/><stop offset="0.538" stop-color="#f3ff4d"/><stop offset="0.562" stop-color="#fff939"/><stop offset="0.587" stop-color="#ffe915"/><stop offset="0.593" stop-color="#ffe500"/><stop offset="0.728" stop-color="#ffa900"/><stop offset="1.002" stop-color="#ff5d00"/></linearGradient><linearGradient id="g71" gradientUnits="userSpaceOnUse" x1="586" x2="875"><stop offset="0.002" stop-color="#00ffb8"/><stop offset="0.327" stop-color="#00ff94"/><stop offset="0.362" stop-color="#00ff8d"/><stop offset="0.365" stop-color="#1fff8d"/><stop offset="0.375" stop-color="#44ff8b"/><stop offset="0.403" stop-color="#76ff84"/><stop offset="0.469" stop-color="#bdff72"/><stop offset="0.552" stop-color="#fffe4b"/><stop offset="0.590" stop-color="#ffe51e"/><stop offset="0.600" stop-color="#ffdf03"/><stop offset="0.742" stop-color="#ffa200"/><stop offset="1.002" stop-color="#ff5b00"/></linearGradient><linearGradient id="g72" gradientUnits="userSpaceOnUse" x1="586" x2="875"><stop offset="0.002" stop-color="#00ffb9"/><stop offset="0.330" stop-color="#00ff96"/><stop offset="0.358" stop-color="#00ff91"/><stop offset="0.365" stop-color="#28ff90"/><stop offset="0.379" stop-color="#51ff8d"/><stop offset="0.413" stop-color="#87ff85"/><stop offset="0.497" stop-color="#d8ff6d"/><stop offset="0.552" stop-color="#fffb50"/><stop offset="0.597" stop-color="#ffde20"/><stop offset="0.611" stop-color="#ffd600"/><stop offset="0.763" stop-color="#ff9900"/><stop offset="1.002" stop-color="#ff5900"/></linearGradient><linearGradient id="g73" gradientUnits="userSpaceOnUse" x1="586" x2="875"><stop offset="0.002" stop-color="#00ffbb"/><stop offset="0.334" stop-color="#00ff99"/><stop offset="0.358" stop-color="#00ff94"/><stop offset="0.362" stop-color="#21ff94"/><stop offset="0.372" stop-color="#45ff92"/><stop offset="0.400" stop-color="#78ff8c"/><stop offset="0.465" stop-color="#bfff7b"/><stop offset="0.545" stop-color="#fffd5b"/><stop offset="0.604" stop-color="#ffd721"/><stop offset="0.614" stop-color="#ffd20d"/><stop offset="0.618" stop-color="#ffd001"/><stop offset="0.780" stop-color="#ff9100"/><stop offset="1.002" stop-color="#ff5600"/></linearGradient><linearGradient id="g74" gradientUnits="userSpaceOnUse" x1="586" x2="875"><stop offset="0.002" stop-color="#00ffbd"/><stop offset="0.337" stop-color="#00ff9b"/><stop offset="0.355" stop-color="#00ff98"/><stop offset="0.362" stop-color="#2aff97"/><stop offset="0.375" stop-color="#52ff94"/><stop offset="0.410" stop-color="#88ff8d"/><stop offset="0.493" stop-color="#daff77"/><stop offset="0.542" stop-color="#fffc62"/><stop offset="0.611" stop-color="#ffd123"/><stop offset="0.628" stop-color="#ffc800"/><stop offset="0.801" stop-color="#ff8900"/><stop offset="1.002" stop-color="#ff5400"/></linearGradient><linearGradient id="g75" gradientUnits="userSpaceOnUse" x1="586" x2="875"><stop offset="0.002" stop-color="#00ffbf"/><stop offset="0.344" stop-color="#00ff9d"/><stop offset="0.355" stop-color="#04ff9b"/><stop offset="0.358" stop-color="#23ff9b"/><stop offset="0.369" stop-color="#47ff99"/><stop offset="0.396" stop-color="#79ff94"/><stop offset="0.462" stop-color="#c2ff84"/><stop offset="0.538" stop-color="#fffc69"/><stop offset="0.618" stop-color="#ffcb24"/><stop offset="0.631" stop-color="#ffc40b"/><stop offset="0.635" stop-color="#ffc300"/><stop offset="0.818" stop-color="#ff8200"/><stop offset="1.002" stop-color="#ff5100"/></linearGradient><linearGradient id="g76" gradientUnits="userSpaceOnUse" x1="586" x2="875"><stop offset="0.002" stop-color="#00ffc1"/><stop offset="0.348" stop-color="#00ff9f"/><stop offset="0.351" stop-color="#00ff9f"/><stop offset="0.358" stop-color="#2cff9e"/><stop offset="0.372" stop-color="#54ff9b"/><stop offset="0.407" stop-color="#8aff95"/><stop offset="0.490" stop-color="#deff81"/><stop offset="0.535" stop-color="#fffc6f"/><stop offset="0.625" stop-color="#ffc525"/><stop offset="0.638" stop-color="#ffbf0f"/><stop offset="0.645" stop-color="#ffbc00"/><stop offset="0.843" stop-color="#ff7900"/><stop offset="1.002" stop-color="#ff4f00"/></linearGradient><linearGradient id="g77" gradientUnits="userSpaceOnUse" x1="586" x2="875"><stop offset="0.002" stop-color="#00ffc3"/><stop offset="0.348" stop-color="#00ffa3"/><stop offset="0.351" stop-color="#08ffa2"/><stop offset="0.355" stop-color="#24ffa1"/><stop offset="0.365" stop-color="#48ffa0"/><stop offset="0.393" stop-color="#7bff9b"/><stop offset="0.458" stop-color="#c5ff8d"/><stop offset="0.531" stop-color="#fffb75"/><stop offset="0.631" stop-color="#ffbf26"/><stop offset="0.649" stop-color="#ffb809"/><stop offset="0.652" stop-color="#ffb600"/><stop offset="0.863" stop-color="#ff7100"/><stop offset="1.002" stop-color="#ff4c00"/></linearGradient><linearGradient id="g78" gradientUnits="userSpaceOnUse" x1="586" x2="875"><stop offset="0.002" stop-color="#00ffc6"/><stop offset="0.348" stop-color="#00ffa6"/><stop offset="0.351" stop-color="#1bffa5"/><stop offset="0.358" stop-color="#3affa4"/><stop offset="0.379" stop-color="#69ffa1"/><stop offset="0.431" stop-color="#acff97"/><stop offset="0.524" stop-color="#fffd7e"/><stop offset="0.621" stop-color="#ffc237"/><stop offset="0.652" stop-color="#ffb414"/><stop offset="0.663" stop-color="#ffaf00"/><stop offset="0.894" stop-color="#ff6600"/><stop offset="1.002" stop-color="#ff4900"/></linearGradient><linearGradient id="g79" gradientUnits="userSpaceOnUse" x1="586" x2="875"><stop offset="0.002" stop-color="#00ffc8"/><stop offset="0.344" stop-color="#00ffa9"/><stop offset="0.348" stop-color="#0cffa9"/><stop offset="0.351" stop-color="#26ffa8"/><stop offset="0.362" stop-color="#4affa7"/><stop offset="0.389" stop-color="#7dffa2"/><stop offset="0.455" stop-color="#c8ff96"/><stop offset="0.521" stop-color="#fffd83"/><stop offset="0.618" stop-color="#ffc13f"/><stop offset="0.659" stop-color="#ffae16"/><stop offset="0.670" stop-color="#ffaa00"/><stop offset="0.926" stop-color="#ff5b00"/><stop offset="1.002" stop-color="#ff4600"/></linearGradient><linearGradient id="g80" gradientUnits="userSpaceOnUse" x1="586" x2="875"><stop offset="0.002" stop-color="#00ffca"/><stop offset="0.344" stop-color="#00ffac"/><stop offset="0.348" stop-color="#1dffac"/><stop offset="0.355" stop-color="#3cffab"/><stop offset="0.375" stop-color="#6bffa8"/><stop offset="0.427" stop-color="#afff9f"/><stop offset="0.517" stop-color="#fffc89"/><stop offset="0.611" stop-color="#ffc249"/><stop offset="0.663" stop-color="#ffab1d"/><stop offset="0.676" stop-color="#ffa502"/><stop offset="0.981" stop-color="#ff4900"/><stop offset="1.002" stop-color="#ff4300"/></linearGradient><linearGradient id="g81" gradientUnits="userSpaceOnUse" x1="586" x2="875"><stop offset="0.002" stop-color="#00ffcc"/><stop offset="0.341" stop-color="#00ffb0"/><stop offset="0.344" stop-color="#0fffb0"/><stop offset="0.348" stop-color="#28ffaf"/><stop offset="0.358" stop-color="#4cffae"/><stop offset="0.386" stop-color="#7fffaa"/><stop offset="0.452" stop-color="#caff9e"/><stop offset="0.514" stop-color="#fffc8e"/><stop offset="0.607" stop-color="#ffc150"/><stop offset="0.670" stop-color="#ffa51e"/><stop offset="0.687" stop-color="#ff9f00"/><stop offset="1.002" stop-color="#ff4000"/></linearGradient><linearGradient id="g82" gradientUnits="userSpaceOnUse" x1="586" x2="875"><stop offset="0.002" stop-color="#00ffce"/><stop offset="0.341" stop-color="#00ffb3"/><stop offset="0.344" stop-color="#1fffb3"/><stop offset="0.351" stop-color="#3effb2"/><stop offset="0.372" stop-color="#6dffaf"/><stop offset="0.424" stop-color="#b1ffa7"/><stop offset="0.507" stop-color="#fffe95"/><stop offset="0.597" stop-color="#ffc35a"/><stop offset="0.673" stop-color="#ffa223"/><stop offset="0.690" stop-color="#ff9b09"/><stop offset="0.694" stop-color="#ff9a00"/><stop offset="1.002" stop-color="#ff3d00"/></linearGradient><linearGradient id="g83" gradientUnits="userSpaceOnUse" x1="586" x2="875"><stop offset="0.002" stop-color="#00ffd0"/><stop offset="0.337" stop-color="#00ffb7"/><stop offset="0.344" stop-color="#2affb6"/><stop offset="0.358" stop-color="#56ffb4"/><stop offset="0.393" stop-color="#90ffb0"/><stop offset="0.472" stop-color="#e5ffa2"/><stop offset="0.507" stop-color="#fffb98"/><stop offset="0.600" stop-color="#ffbf5b"/><stop offset="0.680" stop-color="#ff9d24"/><stop offset="0.697" stop-color="#ff960d"/><stop offset="0.704" stop-color="#ff9400"/><stop offset="1.002" stop-color="#ff3900"/></linearGradient><linearGradient id="g84" gradientUnits="userSpaceOnUse" x1="586" x2="875"><stop offset="0.002" stop-color="#00ffd2"/><stop offset="0.337" stop-color="#00ffba"/><stop offset="0.341" stop-color="#22ffba"/><stop offset="0.351" stop-color="#4affb8"/><stop offset="0.379" stop-color="#80ffb5"/><stop offset="0.445" stop-color="#cdffab"/><stop offset="0.500" stop-color="#fffd9f"/><stop offset="0.590" stop-color="#ffc164"/><stop offset="0.687" stop-color="#ff9825"/><stop offset="0.708" stop-color="#ff9008"/><stop offset="0.715" stop-color="#ff8e00"/><stop offset="1.002" stop-color="#ff3500"/></linearGradient><linearGradient id="g85" gradientUnits="userSpaceOnUse" x1="586" x2="875"><stop offset="0.002" stop-color="#00ffd4"/><stop offset="0.334" stop-color="#00ffbe"/><stop offset="0.341" stop-color="#2cffbd"/><stop offset="0.355" stop-color="#58ffbb"/><stop offset="0.389" stop-color="#92ffb7"/><stop offset="0.472" stop-color="#ebffaa"/><stop offset="0.497" stop-color="#fffca4"/><stop offset="0.587" stop-color="#ffc069"/><stop offset="0.694" stop-color="#ff9326"/><stop offset="0.715" stop-color="#ff8b0b"/><stop offset="0.721" stop-color="#ff8900"/><stop offset="1.002" stop-color="#ff3100"/></linearGradient><linearGradient id="g86" gradientUnits="userSpaceOnUse" x1="586" x2="875"><stop offset="0.002" stop-color="#00ffd6"/><stop offset="0.334" stop-color="#00ffc1"/><stop offset="0.337" stop-color="#24ffc1"/><stop offset="0.348" stop-color="#4bffc0"/><stop offset="0.375" stop-color="#82ffbc"/><stop offset="0.441" stop-color="#d1ffb4"/><stop offset="0.493" stop-color="#fffca9"/><stop offset="0.580" stop-color="#ffc170"/><stop offset="0.701" stop-color="#ff8e26"/><stop offset="0.721" stop-color="#ff860e"/><stop offset="0.728" stop-color="#ff8400"/><stop offset="1.002" stop-color="#ff2d00"/></linearGradient><linearGradient id="g87" gradientUnits="userSpaceOnUse" x1="586" x2="875"><stop offset="0.002" stop-color="#00ffd9"/><stop offset="0.330" stop-color="#00ffc5"/><stop offset="0.337" stop-color="#2effc4"/><stop offset="0.351" stop-color="#59ffc3"/><stop offset="0.386" stop-color="#94ffbf"/><stop offset="0.469" stop-color="#efffb3"/><stop offset="0.490" stop-color="#fffbad"/><stop offset="0.576" stop-color="#ffc074"/><stop offset="0.708" stop-color="#ff8927"/><stop offset="0.732" stop-color="#ff8109"/><stop offset="0.739" stop-color="#ff7e00"/><stop offset="1.002" stop-color="#ff2800"/></linearGradient><linearGradient id="g88" gradientUnits="userSpaceOnUse" x1="586" x2="875"><stop offset="0.002" stop-color="#00ffdb"/><stop offset="0.330" stop-color="#04ffc8"/><stop offset="0.334" stop-color="#26ffc8"/><stop offset="0.344" stop-color="#4dffc7"/><stop offset="0.372" stop-color="#84ffc4"/><stop offset="0.438" stop-color="#d4ffbc"/><stop offset="0.486" stop-color="#fffbb2"/><stop offset="0.573" stop-color="#ffbf79"/><stop offset="0.715" stop-color="#ff8428"/><stop offset="0.739" stop-color="#ff7c0c"/><stop offset="0.746" stop-color="#ff7900"/><stop offset="0.995" stop-color="#ff2600"/><stop offset="1.002" stop-color="#ff2200"/></linearGradient><linearGradient id="g89" gradientUnits="userSpaceOnUse" x1="586" x2="875"><stop offset="0.002" stop-color="#00ffdd"/><stop offset="0.327" stop-color="#00ffcc"/><stop offset="0.334" stop-color="#30ffcb"/><stop offset="0.348" stop-color="#5bffca"/><stop offset="0.382" stop-color="#97ffc6"/><stop offset="0.465" stop-color="#f3ffbc"/><stop offset="0.483" stop-color="#fffab6"/><stop offset="0.569" stop-color="#ffbe7d"/><stop offset="0.725" stop-color="#ff7e26"/><stop offset="0.749" stop-color="#ff7608"/><stop offset="0.756" stop-color="#ff7300"/><stop offset="0.981" stop-color="#ff2700"/><stop offset="1.002" stop-color="#ff1b00"/></linearGradient><linearGradient id="g90" gradientUnits="userSpaceOnUse" x1="586" x2="875"><stop offset="0.002" stop-color="#00ffdf"/><stop offset="0.324" stop-color="#00ffcf"/><stop offset="0.327" stop-color="#09ffcf"/><stop offset="0.330" stop-color="#28ffcf"/><stop offset="0.341" stop-color="#4fffce"/><stop offset="0.369" stop-color="#86ffcb"/><stop offset="0.434" stop-color="#d8ffc5"/><stop offset="0.476" stop-color="#fffdbe"/><stop offset="0.559" stop-color="#ffc185"/><stop offset="0.711" stop-color="#ff8035"/><stop offset="0.753" stop-color="#ff7211"/><stop offset="0.763" stop-color="#ff6f00"/><stop offset="0.971" stop-color="#ff2600"/><stop offset="1.002" stop-color="#ff1200"/></linearGradient><linearGradient id="g91" gradientUnits="userSpaceOnUse" x1="586" x2="875"><stop offset="0.002" stop-color="#00ffe2"/><stop offset="0.324" stop-color="#00ffd3"/><stop offset="0.327" stop-color="#1effd2"/><stop offset="0.334" stop-color="#40ffd2"/><stop offset="0.355" stop-color="#73ffd0"/><stop offset="0.403" stop-color="#b9ffcc"/><stop offset="0.472" stop-color="#fffcc2"/><stop offset="0.552" stop-color="#ffc28b"/><stop offset="0.701" stop-color="#ff813f"/><stop offset="0.756" stop-color="#ff6e17"/><stop offset="0.770" stop-color="#ff6a00"/><stop offset="0.960" stop-color="#ff2600"/><stop offset="0.998" stop-color="#ff0900"/><stop offset="1.002" stop-color="#ff0500"/></linearGradient><linearGradient id="g92" gradientUnits="userSpaceOnUse" x1="586" x2="875"><stop offset="0.002" stop-color="#00ffe4"/><stop offset="0.320" stop-color="#00ffd6"/><stop offset="0.324" stop-color="#0dffd6"/><stop offset="0.327" stop-color="#2affd6"/><stop offset="0.337" stop-color="#51ffd5"/><stop offset="0.365" stop-color="#89ffd3"/><stop offset="0.431" stop-color="#dbffcd"/><stop offset="0.469" stop-color="#fffcc6"/><stop offset="0.548" stop-color="#ffc18f"/><stop offset="0.697" stop-color="#ff7f44"/><stop offset="0.763" stop-color="#ff6918"/><stop offset="0.780" stop-color="#ff6300"/><stop offset="0.953" stop-color="#ff2300"/><stop offset="0.988" stop-color="#ff0700"/><stop offset="1.002" stop-color="#ff0000"/></linearGradient><linearGradient id="g93" gradientUnits="userSpaceOnUse" x1="586" x2="875"><stop offset="0.002" stop-color="#00ffe6"/><stop offset="0.320" stop-color="#00ffda"/><stop offset="0.324" stop-color="#20ffda"/><stop offset="0.330" stop-color="#42ffd9"/><stop offset="0.351" stop-color="#75ffd8"/><stop offset="0.400" stop-color="#bcffd4"/><stop offset="0.462" stop-color="#fffece"/><stop offset="0.538" stop-color="#ffc496"/><stop offset="0.680" stop-color="#ff8350"/><stop offset="0.766" stop-color="#ff651d"/><stop offset="0.787" stop-color="#ff5e00"/><stop offset="0.943" stop-color="#ff2300"/><stop offset="0.978" stop-color="#ff0500"/><stop offset="1.002" stop-color="#ff0000"/></linearGradient><linearGradient id="g94" gradientUnits="userSpaceOnUse" x1="586" x2="875"><stop offset="0.002" stop-color="#00ffe9"/><stop offset="0.317" stop-color="#00ffde"/><stop offset="0.320" stop-color="#11ffdd"/><stop offset="0.324" stop-color="#2cffdd"/><stop offset="0.334" stop-color="#53ffdd"/><stop offset="0.362" stop-color="#8bffdb"/><stop offset="0.427" stop-color="#dfffd6"/><stop offset="0.458" stop-color="#fffed2"/><stop offset="0.535" stop-color="#ffc39a"/><stop offset="0.676" stop-color="#ff8154"/><stop offset="0.770" stop-color="#ff6121"/><stop offset="0.791" stop-color="#ff5a08"/><stop offset="0.801" stop-color="#ff5600"/><stop offset="0.936" stop-color="#ff2000"/><stop offset="0.974" stop-color="#ff0000"/><stop offset="1.002" stop-color="#ff0000"/></linearGradient><linearGradient id="g95" gradientUnits="userSpaceOnUse" x1="586" x2="875"><stop offset="0.002" stop-color="#00ffeb"/><stop offset="0.317" stop-color="#00ffe1"/><stop offset="0.320" stop-color="#23ffe1"/><stop offset="0.327" stop-color="#44ffe1"/><stop offset="0.348" stop-color="#77ffe0"/><stop offset="0.396" stop-color="#bfffdd"/><stop offset="0.455" stop-color="#fffdd7"/><stop offset="0.531" stop-color="#ffc29e"/><stop offset="0.670" stop-color="#ff815a"/><stop offset="0.777" stop-color="#ff5b21"/><stop offset="0.808" stop-color="#ff5100"/><stop offset="0.926" stop-color="#ff1f00"/><stop offset="0.960" stop-color="#ff0000"/><stop offset="1.002" stop-color="#ff0000"/></linearGradient><linearGradient id="g96" gradientUnits="userSpaceOnUse" x1="586" x2="875"><stop offset="0.002" stop-color="#00ffee"/><stop offset="0.313" stop-color="#00ffe5"/><stop offset="0.320" stop-color="#2fffe5"/><stop offset="0.330" stop-color="#55ffe4"/><stop offset="0.358" stop-color="#8effe3"/><stop offset="0.424" stop-color="#e3ffdf"/><stop offset="0.452" stop-color="#fffcdb"/><stop offset="0.528" stop-color="#ffc1a1"/><stop offset="0.666" stop-color="#ff805e"/><stop offset="0.784" stop-color="#ff5622"/><stop offset="0.808" stop-color="#ff4d07"/><stop offset="0.818" stop-color="#ff4a00"/><stop offset="0.919" stop-color="#ff1c00"/><stop offset="0.950" stop-color="#ff0000"/><stop offset="1.002" stop-color="#ff0000"/></linearGradient><linearGradient id="g97" gradientUnits="userSpaceOnUse" x1="586" x2="875"><stop offset="0.002" stop-color="#00fff0"/><stop offset="0.313" stop-color="#00ffe9"/><stop offset="0.317" stop-color="#25ffe9"/><stop offset="0.324" stop-color="#46ffe8"/><stop offset="0.344" stop-color="#7affe7"/><stop offset="0.393" stop-color="#c3ffe5"/><stop offset="0.448" stop-color="#fffcdf"/><stop offset="0.521" stop-color="#ffc2a7"/><stop offset="0.656" stop-color="#ff8165"/><stop offset="0.791" stop-color="#ff5023"/><stop offset="0.815" stop-color="#ff470a"/><stop offset="0.825" stop-color="#ff4300"/><stop offset="0.912" stop-color="#ff1800"/><stop offset="0.936" stop-color="#ff0000"/><stop offset="1.002" stop-color="#ff0000"/></linearGradient><linearGradient id="g98" gradientUnits="userSpaceOnUse" x1="586" x2="875"><stop offset="0.002" stop-color="#00fff3"/><stop offset="0.310" stop-color="#00ffec"/><stop offset="0.317" stop-color="#31ffec"/><stop offset="0.327" stop-color="#57ffec"/><stop offset="0.355" stop-color="#91ffeb"/><stop offset="0.420" stop-color="#e8ffe8"/><stop offset="0.445" stop-color="#fffbe4"/><stop offset="0.517" stop-color="#ffc0ab"/><stop offset="0.652" stop-color="#ff7f68"/><stop offset="0.794" stop-color="#ff4b26"/><stop offset="0.822" stop-color="#ff410c"/><stop offset="0.832" stop-color="#ff3c00"/><stop offset="0.905" stop-color="#ff1400"/><stop offset="0.922" stop-color="#ff0000"/><stop offset="1.002" stop-color="#ff0000"/></linearGradient><linearGradient id="g99" gradientUnits="userSpaceOnUse" x1="586" x2="875"><stop offset="0.002" stop-color="#00fff5"/><stop offset="0.310" stop-color="#00fff0"/><stop offset="0.313" stop-color="#28fff0"/><stop offset="0.320" stop-color="#48fff0"/><stop offset="0.341" stop-color="#7cfff0"/><stop offset="0.389" stop-color="#c6ffee"/><stop offset="0.438" stop-color="#fffeec"/><stop offset="0.507" stop-color="#ffc4b3"/><stop offset="0.635" stop-color="#ff8371"/><stop offset="0.801" stop-color="#ff4526"/><stop offset="0.832" stop-color="#ff3809"/><stop offset="0.843" stop-color="#ff3300"/><stop offset="0.894" stop-color="#ff1200"/><stop offset="0.912" stop-color="#ff0000"/><stop offset="1.002" stop-color="#ff0000"/></linearGradient><linearGradient id="g100" gradientUnits="userSpaceOnUse" x1="586" x2="875"><stop offset="0.002" stop-color="#00fff8"/><stop offset="0.306" stop-color="#00fff4"/><stop offset="0.313" stop-color="#33fff4"/><stop offset="0.324" stop-color="#5afff4"/><stop offset="0.351" stop-color="#94fff3"/><stop offset="0.417" stop-color="#ecfff2"/><stop offset="0.438" stop-color="#fffaec"/><stop offset="0.510" stop-color="#ffbeb2"/><stop offset="0.645" stop-color="#ff7c6f"/><stop offset="0.811" stop-color="#ff3c25"/><stop offset="0.839" stop-color="#ff2f0b"/><stop offset="0.849" stop-color="#ff2a00"/><stop offset="0.888" stop-color="#ff0d00"/><stop offset="0.898" stop-color="#ff0000"/><stop offset="1.002" stop-color="#ff0000"/></linearGradient><linearGradient id="g101" gradientUnits="userSpaceOnUse" x1="586" x2="875"><stop offset="0.002" stop-color="#00fffa"/><stop offset="0.306" stop-color="#04fff8"/><stop offset="0.310" stop-color="#2afff8"/><stop offset="0.320" stop-color="#56fff8"/><stop offset="0.344" stop-color="#8cfff8"/><stop offset="0.403" stop-color="#e0fff7"/><stop offset="0.431" stop-color="#fffdf4"/><stop offset="0.500" stop-color="#ffc1ba"/><stop offset="0.628" stop-color="#ff8078"/><stop offset="0.815" stop-color="#ff3627"/><stop offset="0.846" stop-color="#ff250d"/><stop offset="0.856" stop-color="#ff1f00"/><stop offset="0.888" stop-color="#ff0000"/><stop offset="1.002" stop-color="#ff0000"/></linearGradient><linearGradient id="g102" gradientUnits="userSpaceOnUse" x1="586" x2="875"><stop offset="0.002" stop-color="#00fffd"/><stop offset="0.303" stop-color="#00fffc"/><stop offset="0.310" stop-color="#36fffc"/><stop offset="0.324" stop-color="#65fffc"/><stop offset="0.355" stop-color="#a2fffc"/><stop offset="0.424" stop-color="#fefffc"/><stop offset="0.497" stop-color="#ffc0bd"/><stop offset="0.625" stop-color="#ff7e7b"/><stop offset="0.825" stop-color="#ff2b26"/><stop offset="0.856" stop-color="#ff150a"/><stop offset="0.867" stop-color="#ff0800"/><stop offset="0.881" stop-color="#ff0000"/><stop offset="1.002" stop-color="#ff0000"/></linearGradient><linearGradient id="g103" gradientUnits="userSpaceOnUse" x1="586" x2="875"><stop offset="0.002" stop-color="#00feff"/><stop offset="0.299" stop-color="#00feff"/><stop offset="0.303" stop-color="#0afeff"/><stop offset="0.306" stop-color="#2dfeff"/><stop offset="0.317" stop-color="#57feff"/><stop offset="0.341" stop-color="#8efeff"/><stop offset="0.400" stop-color="#e3fdff"/><stop offset="0.424" stop-color="#fffbfd"/><stop offset="0.490" stop-color="#ffc1c3"/><stop offset="0.611" stop-color="#ff8183"/><stop offset="0.822" stop-color="#ff262c"/><stop offset="0.853" stop-color="#ff0a17"/><stop offset="0.863" stop-color="#ff000c"/><stop offset="0.874" stop-color="#ff0000"/><stop offset="1.002" stop-color="#ff0000"/></linearGradient><linearGradient id="g104" gradientUnits="userSpaceOnUse" x1="586" x2="875"><stop offset="0.002" stop-color="#00fcff"/><stop offset="0.299" stop-color="#00faff"/><stop offset="0.303" stop-color="#21faff"/><stop offset="0.310" stop-color="#46faff"/><stop offset="0.327" stop-color="#75f9ff"/><stop offset="0.369" stop-color="#bbf9ff"/><stop offset="0.424" stop-color="#fff7fe"/><stop offset="0.490" stop-color="#ffbdc4"/><stop offset="0.611" stop-color="#ff7d84"/><stop offset="0.808" stop-color="#ff2837"/><stop offset="0.839" stop-color="#ff0d27"/><stop offset="0.849" stop-color="#ff0020"/><stop offset="0.884" stop-color="#ff0000"/><stop offset="1.002" stop-color="#ff0000"/></linearGradient><linearGradient id="g105" gradientUnits="userSpaceOnUse" x1="586" x2="875"><stop offset="0.002" stop-color="#00f9ff"/><stop offset="0.296" stop-color="#00f6ff"/><stop offset="0.299" stop-color="#0ef6ff"/><stop offset="0.303" stop-color="#2df6ff"/><stop offset="0.313" stop-color="#57f5ff"/><stop offset="0.341" stop-color="#92f5ff"/><stop offset="0.403" stop-color="#e8f3ff"/><stop offset="0.427" stop-color="#ffeefa"/><stop offset="0.500" stop-color="#ffb3be"/><stop offset="0.635" stop-color="#ff707c"/><stop offset="0.798" stop-color="#ff273e"/><stop offset="0.829" stop-color="#ff0b30"/><stop offset="0.839" stop-color="#ff002b"/><stop offset="0.881" stop-color="#ff000b"/><stop offset="0.891" stop-color="#ff0000"/><stop offset="1.002" stop-color="#ff0000"/></linearGradient><linearGradient id="g106" gradientUnits="userSpaceOnUse" x1="586" x2="875"><stop offset="0.002" stop-color="#00f7ff"/><stop offset="0.296" stop-color="#00f2ff"/><stop offset="0.299" stop-color="#22f2ff"/><stop offset="0.306" stop-color="#45f1ff"/><stop offset="0.324" stop-color="#74f1ff"/><stop offset="0.365" stop-color="#b8f0ff"/><stop offset="0.424" stop-color="#ffedfe"/><stop offset="0.493" stop-color="#ffb4c4"/><stop offset="0.621" stop-color="#ff7283"/><stop offset="0.787" stop-color="#ff2645"/><stop offset="0.818" stop-color="#ff0838"/><stop offset="0.832" stop-color="#ff0032"/><stop offset="0.884" stop-color="#ff0011"/><stop offset="0.898" stop-color="#ff0000"/><stop offset="1.002" stop-color="#ff0000"/></linearGradient><linearGradient id="g107" gradientUnits="userSpaceOnUse" x1="586" x2="875"><stop offset="0.002" stop-color="#00f4ff"/><stop offset="0.292" stop-color="#00eeff"/><stop offset="0.296" stop-color="#12eeff"/><stop offset="0.299" stop-color="#2eeeff"/><stop offset="0.310" stop-color="#56edff"/><stop offset="0.337" stop-color="#90ecff"/><stop offset="0.403" stop-color="#e8eaff"/><stop offset="0.427" stop-color="#ffe5fb"/><stop offset="0.500" stop-color="#ffabc0"/><stop offset="0.635" stop-color="#ff687f"/><stop offset="0.777" stop-color="#ff264b"/><stop offset="0.804" stop-color="#ff0b41"/><stop offset="0.815" stop-color="#ff003d"/><stop offset="0.888" stop-color="#ff0016"/><stop offset="0.908" stop-color="#ff0000"/><stop offset="1.002" stop-color="#ff0000"/></linearGradient><linearGradient id="g108" gradientUnits="userSpaceOnUse" x1="586" x2="875"><stop offset="0.002" stop-color="#00f1ff"/><stop offset="0.292" stop-color="#00eaff"/><stop offset="0.296" stop-color="#23eaff"/><stop offset="0.303" stop-color="#45eaff"/><stop offset="0.324" stop-color="#7ae9ff"/><stop offset="0.372" stop-color="#c3e7ff"/><stop offset="0.427" stop-color="#ffe0fb"/><stop offset="0.500" stop-color="#ffa8c1"/><stop offset="0.635" stop-color="#ff6581"/><stop offset="0.766" stop-color="#ff2551"/><stop offset="0.794" stop-color="#ff0847"/><stop offset="0.804" stop-color="#ff0043"/><stop offset="0.891" stop-color="#ff0019"/><stop offset="0.915" stop-color="#ff0000"/><stop offset="1.002" stop-color="#ff0000"/></linearGradient><linearGradient id="g109" gradientUnits="userSpaceOnUse" x1="586" x2="875"><stop offset="0.002" stop-color="#00efff"/><stop offset="0.289" stop-color="#00e6ff"/><stop offset="0.296" stop-color="#2fe6ff"/><stop offset="0.306" stop-color="#55e5ff"/><stop offset="0.334" stop-color="#8ee4ff"/><stop offset="0.400" stop-color="#e4e0ff"/><stop offset="0.427" stop-color="#ffdcfc"/><stop offset="0.503" stop-color="#ffa2c0"/><stop offset="0.642" stop-color="#ff5e7f"/><stop offset="0.760" stop-color="#ff2156"/><stop offset="0.791" stop-color="#ff004b"/><stop offset="0.894" stop-color="#ff001d"/><stop offset="0.926" stop-color="#ff0000"/><stop offset="1.002" stop-color="#ff0000"/></linearGradient><linearGradient id="g110" gradientUnits="userSpaceOnUse" x1="586" x2="875"><stop offset="0.002" stop-color="#00ecff"/><stop offset="0.289" stop-color="#00e2ff"/><stop offset="0.292" stop-color="#25e2ff"/><stop offset="0.299" stop-color="#45e2ff"/><stop offset="0.320" stop-color="#78e1ff"/><stop offset="0.369" stop-color="#c0deff"/><stop offset="0.427" stop-color="#ffd7fc"/><stop offset="0.503" stop-color="#ff9ec1"/><stop offset="0.645" stop-color="#ff5880"/><stop offset="0.749" stop-color="#ff205b"/><stop offset="0.777" stop-color="#ff0052"/><stop offset="0.898" stop-color="#ff0020"/><stop offset="0.933" stop-color="#ff0000"/><stop offset="1.002" stop-color="#ff0000"/></linearGradient><linearGradient id="g111" gradientUnits="userSpaceOnUse" x1="586" x2="875"><stop offset="0.002" stop-color="#00eaff"/><stop offset="0.285" stop-color="#00dfff"/><stop offset="0.292" stop-color="#2fdeff"/><stop offset="0.303" stop-color="#55deff"/><stop offset="0.330" stop-color="#8cdcff"/><stop offset="0.396" stop-color="#e0d7ff"/><stop offset="0.427" stop-color="#ffd2fd"/><stop offset="0.503" stop-color="#ff9ac2"/><stop offset="0.645" stop-color="#ff5481"/><stop offset="0.739" stop-color="#ff1f61"/><stop offset="0.766" stop-color="#ff0057"/><stop offset="0.905" stop-color="#ff0020"/><stop offset="0.943" stop-color="#ff0000"/><stop offset="1.002" stop-color="#ff0000"/></linearGradient><linearGradient id="g112" gradientUnits="userSpaceOnUse" x1="586" x2="875"><stop offset="0.002" stop-color="#00e7ff"/><stop offset="0.285" stop-color="#00dbff"/><stop offset="0.289" stop-color="#26dbff"/><stop offset="0.299" stop-color="#4fdaff"/><stop offset="0.324" stop-color="#83d8ff"/><stop offset="0.382" stop-color="#d1d4ff"/><stop offset="0.427" stop-color="#ffcefd"/><stop offset="0.503" stop-color="#ff96c3"/><stop offset="0.645" stop-color="#ff4f82"/><stop offset="0.728" stop-color="#ff1e66"/><stop offset="0.753" stop-color="#ff005e"/><stop offset="0.908" stop-color="#ff0023"/><stop offset="0.943" stop-color="#ff0005"/><stop offset="0.967" stop-color="#ff0000"/><stop offset="1.002" stop-color="#ff0000"/></linearGradient><linearGradient id="g113" gradientUnits="userSpaceOnUse" x1="586" x2="875"><stop offset="0.002" stop-color="#00e4ff"/><stop offset="0.282" stop-color="#00d7ff"/><stop offset="0.289" stop-color="#30d7ff"/><stop offset="0.303" stop-color="#5dd6ff"/><stop offset="0.337" stop-color="#9ad3ff"/><stop offset="0.420" stop-color="#facbff"/><stop offset="0.448" stop-color="#ffb7ea"/><stop offset="0.542" stop-color="#ff7daf"/><stop offset="0.708" stop-color="#ff266e"/><stop offset="0.732" stop-color="#ff0c66"/><stop offset="0.742" stop-color="#ff0063"/><stop offset="0.915" stop-color="#ff0023"/><stop offset="0.950" stop-color="#ff0007"/><stop offset="0.964" stop-color="#ff0000"/><stop offset="1.002" stop-color="#ff0000"/></linearGradient><linearGradient id="g114" gradientUnits="userSpaceOnUse" x1="586" x2="875"><stop offset="0.002" stop-color="#00e2ff"/><stop offset="0.282" stop-color="#03d4ff"/><stop offset="0.285" stop-color="#27d3ff"/><stop offset="0.296" stop-color="#4fd3ff"/><stop offset="0.324" stop-color="#87d0ff"/><stop offset="0.386" stop-color="#d6caff"/><stop offset="0.427" stop-color="#ffc4fe"/><stop offset="0.507" stop-color="#ff8cc3"/><stop offset="0.652" stop-color="#ff4183"/><stop offset="0.711" stop-color="#ff186f"/><stop offset="0.728" stop-color="#ff0069"/><stop offset="0.922" stop-color="#ff0024"/><stop offset="0.957" stop-color="#ff0009"/><stop offset="0.967" stop-color="#ff0000"/><stop offset="1.002" stop-color="#ff0000"/></linearGradient><linearGradient id="g115" gradientUnits="userSpaceOnUse" x1="586" x2="875"><stop offset="0.002" stop-color="#00dfff"/><stop offset="0.279" stop-color="#00d0ff"/><stop offset="0.285" stop-color="#30d0ff"/><stop offset="0.299" stop-color="#5ccfff"/><stop offset="0.334" stop-color="#98cbff"/><stop offset="0.417" stop-color="#f6c2ff"/><stop offset="0.434" stop-color="#ffbaf7"/><stop offset="0.521" stop-color="#ff80bc"/><stop offset="0.683" stop-color="#ff2779"/><stop offset="0.708" stop-color="#ff0c71"/><stop offset="0.715" stop-color="#ff006f"/><stop offset="0.926" stop-color="#ff0026"/><stop offset="0.964" stop-color="#ff000b"/><stop offset="0.978" stop-color="#ff0000"/><stop offset="1.002" stop-color="#ff0000"/></linearGradient><linearGradient id="g116" gradientUnits="userSpaceOnUse" x1="586" x2="875"><stop offset="0.002" stop-color="#00ddff"/><stop offset="0.275" stop-color="#00cdff"/><stop offset="0.279" stop-color="#07cdff"/><stop offset="0.282" stop-color="#27ccff"/><stop offset="0.292" stop-color="#4fcbff"/><stop offset="0.320" stop-color="#86c9ff"/><stop offset="0.386" stop-color="#d6c1ff"/><stop offset="0.431" stop-color="#ffb8fb"/><stop offset="0.514" stop-color="#ff80c1"/><stop offset="0.670" stop-color="#ff297f"/><stop offset="0.694" stop-color="#ff0f77"/><stop offset="0.704" stop-color="#ff0074"/><stop offset="0.933" stop-color="#ff0026"/><stop offset="0.974" stop-color="#ff0008"/><stop offset="0.984" stop-color="#ff0000"/><stop offset="1.002" stop-color="#ff0000"/></linearGradient><linearGradient id="g117" gradientUnits="userSpaceOnUse" x1="586" x2="875"><stop offset="0.002" stop-color="#00daff"/><stop offset="0.275" stop-color="#00c9ff"/><stop offset="0.279" stop-color="#1cc9ff"/><stop offset="0.285" stop-color="#3ec8ff"/><stop offset="0.306" stop-color="#71c6ff"/><stop offset="0.355" stop-color="#b5c1ff"/><stop offset="0.427" stop-color="#ffb6ff"/><stop offset="0.510" stop-color="#ff7dc3"/><stop offset="0.659" stop-color="#ff2884"/><stop offset="0.683" stop-color="#ff0c7c"/><stop offset="0.690" stop-color="#ff007a"/><stop offset="0.939" stop-color="#ff0027"/><stop offset="0.981" stop-color="#ff000a"/><stop offset="0.995" stop-color="#ff0000"/><stop offset="1.002" stop-color="#ff0000"/></linearGradient><linearGradient id="g118" gradientUnits="userSpaceOnUse" x1="586" x2="875"><stop offset="0.002" stop-color="#00d8ff"/><stop offset="0.272" stop-color="#00c6ff"/><stop offset="0.275" stop-color="#0bc5ff"/><stop offset="0.279" stop-color="#28c5ff"/><stop offset="0.289" stop-color="#4ec4ff"/><stop offset="0.317" stop-color="#84c1ff"/><stop offset="0.382" stop-color="#d4b9ff"/><stop offset="0.431" stop-color="#ffaefc"/><stop offset="0.517" stop-color="#ff75c0"/><stop offset="0.649" stop-color="#ff2789"/><stop offset="0.673" stop-color="#ff0981"/><stop offset="0.680" stop-color="#ff007e"/><stop offset="0.950" stop-color="#ff0025"/><stop offset="0.991" stop-color="#ff0008"/><stop offset="1.002" stop-color="#ff0000"/></linearGradient><linearGradient id="g119" gradientUnits="userSpaceOnUse" x1="586" x2="875"><stop offset="0.002" stop-color="#00d5ff"/><stop offset="0.272" stop-color="#00c2ff"/><stop offset="0.275" stop-color="#1ec2ff"/><stop offset="0.282" stop-color="#3ec1ff"/><stop offset="0.303" stop-color="#6fbfff"/><stop offset="0.351" stop-color="#b3b9ff"/><stop offset="0.431" stop-color="#ffaafc"/><stop offset="0.517" stop-color="#ff70c1"/><stop offset="0.638" stop-color="#ff268e"/><stop offset="0.659" stop-color="#ff0d86"/><stop offset="0.666" stop-color="#ff0084"/><stop offset="0.957" stop-color="#ff0026"/><stop offset="0.998" stop-color="#ff0009"/><stop offset="1.002" stop-color="#ff0005"/></linearGradient><linearGradient id="g120" gradientUnits="userSpaceOnUse" x1="586" x2="875"><stop offset="0.002" stop-color="#00d3ff"/><stop offset="0.268" stop-color="#00bfff"/><stop offset="0.272" stop-color="#0fbeff"/><stop offset="0.275" stop-color="#29beff"/><stop offset="0.285" stop-color="#4ebdff"/><stop offset="0.313" stop-color="#83baff"/><stop offset="0.379" stop-color="#d1b0ff"/><stop offset="0.431" stop-color="#ffa5fc"/><stop offset="0.517" stop-color="#ff6bc2"/><stop offset="0.628" stop-color="#ff2592"/><stop offset="0.649" stop-color="#ff098b"/><stop offset="0.656" stop-color="#ff0089"/><stop offset="0.964" stop-color="#ff0026"/><stop offset="1.002" stop-color="#ff000f"/></linearGradient><linearGradient id="g121" gradientUnits="userSpaceOnUse" x1="586" x2="875"><stop offset="0.002" stop-color="#00d0ff"/><stop offset="0.268" stop-color="#00bbff"/><stop offset="0.272" stop-color="#1fbbff"/><stop offset="0.279" stop-color="#3ebaff"/><stop offset="0.299" stop-color="#6eb7ff"/><stop offset="0.348" stop-color="#b0b1ff"/><stop offset="0.431" stop-color="#ffa0fd"/><stop offset="0.521" stop-color="#ff64c1"/><stop offset="0.618" stop-color="#ff2497"/><stop offset="0.635" stop-color="#ff0d91"/><stop offset="0.642" stop-color="#ff008f"/><stop offset="0.974" stop-color="#ff0025"/><stop offset="1.002" stop-color="#ff0015"/></linearGradient><linearGradient id="g122" gradientUnits="userSpaceOnUse" x1="586" x2="875"><stop offset="0.002" stop-color="#00ceff"/><stop offset="0.265" stop-color="#00b8ff"/><stop offset="0.272" stop-color="#2ab7ff"/><stop offset="0.282" stop-color="#4db6ff"/><stop offset="0.310" stop-color="#81b2ff"/><stop offset="0.375" stop-color="#cea8ff"/><stop offset="0.431" stop-color="#ff9bfd"/><stop offset="0.521" stop-color="#ff5fc2"/><stop offset="0.607" stop-color="#ff239c"/><stop offset="0.625" stop-color="#ff0a96"/><stop offset="0.631" stop-color="#ff0093"/><stop offset="0.981" stop-color="#ff0025"/><stop offset="1.002" stop-color="#ff001b"/></linearGradient><linearGradient id="g123" gradientUnits="userSpaceOnUse" x1="586" x2="875"><stop offset="0.002" stop-color="#00cbff"/><stop offset="0.265" stop-color="#00b4ff"/><stop offset="0.268" stop-color="#20b4ff"/><stop offset="0.279" stop-color="#49b2ff"/><stop offset="0.306" stop-color="#7eafff"/><stop offset="0.372" stop-color="#cba4ff"/><stop offset="0.431" stop-color="#ff95fd"/><stop offset="0.521" stop-color="#ff59c3"/><stop offset="0.597" stop-color="#ff22a1"/><stop offset="0.618" stop-color="#ff0099"/><stop offset="0.991" stop-color="#ff0024"/><stop offset="1.002" stop-color="#ff001f"/></linearGradient><linearGradient id="g124" gradientUnits="userSpaceOnUse" x1="586" x2="875"><stop offset="0.002" stop-color="#00c9ff"/><stop offset="0.261" stop-color="#00b1ff"/><stop offset="0.268" stop-color="#2ab0ff"/><stop offset="0.282" stop-color="#55aeff"/><stop offset="0.317" stop-color="#8ea9ff"/><stop offset="0.400" stop-color="#e599ff"/><stop offset="0.434" stop-color="#ff8dfb"/><stop offset="0.528" stop-color="#ff4fc0"/><stop offset="0.587" stop-color="#ff20a6"/><stop offset="0.600" stop-color="#ff0aa1"/><stop offset="0.604" stop-color="#ff01a0"/><stop offset="0.998" stop-color="#ff0025"/><stop offset="1.002" stop-color="#ff0023"/></linearGradient><linearGradient id="g125" gradientUnits="userSpaceOnUse" x1="586" x2="875"><stop offset="0.002" stop-color="#00c6ff"/><stop offset="0.261" stop-color="#00adff"/><stop offset="0.265" stop-color="#21adff"/><stop offset="0.275" stop-color="#48abff"/><stop offset="0.303" stop-color="#7da7ff"/><stop offset="0.369" stop-color="#c99bff"/><stop offset="0.431" stop-color="#ff8bfe"/><stop offset="0.524" stop-color="#ff4bc2"/><stop offset="0.576" stop-color="#ff1fab"/><stop offset="0.593" stop-color="#ff00a4"/><stop offset="0.901" stop-color="#ff0048"/><stop offset="1.002" stop-color="#ff0027"/></linearGradient><linearGradient id="g126" gradientUnits="userSpaceOnUse" x1="586" x2="875"><stop offset="0.002" stop-color="#00c3ff"/><stop offset="0.258" stop-color="#00aaff"/><stop offset="0.265" stop-color="#2ba9ff"/><stop offset="0.279" stop-color="#55a7ff"/><stop offset="0.313" stop-color="#8da1ff"/><stop offset="0.396" stop-color="#e290ff"/><stop offset="0.434" stop-color="#ff82fb"/><stop offset="0.531" stop-color="#ff3ec0"/><stop offset="0.569" stop-color="#ff18af"/><stop offset="0.580" stop-color="#ff00ab"/><stop offset="0.829" stop-color="#ff005e"/><stop offset="1.002" stop-color="#ff002a"/></linearGradient><linearGradient id="g127" gradientUnits="userSpaceOnUse" x1="586" x2="875"><stop offset="0.002" stop-color="#00c1ff"/><stop offset="0.258" stop-color="#02a6ff"/><stop offset="0.261" stop-color="#23a6ff"/><stop offset="0.272" stop-color="#48a4ff"/><stop offset="0.299" stop-color="#7ca0ff"/><stop offset="0.365" stop-color="#c692ff"/><stop offset="0.434" stop-color="#ff7dfc"/><stop offset="0.531" stop-color="#ff35c1"/><stop offset="0.559" stop-color="#ff16b4"/><stop offset="0.569" stop-color="#ff00b0"/><stop offset="0.798" stop-color="#ff0067"/><stop offset="1.002" stop-color="#ff002d"/></linearGradient><linearGradient id="g128" gradientUnits="userSpaceOnUse" x1="586" x2="875"><stop offset="0.002" stop-color="#00beff"/><stop offset="0.254" stop-color="#00a3ff"/><stop offset="0.261" stop-color="#2ca2ff"/><stop offset="0.275" stop-color="#54a0ff"/><stop offset="0.310" stop-color="#8c9aff"/><stop offset="0.393" stop-color="#e086ff"/><stop offset="0.434" stop-color="#ff77fc"/><stop offset="0.531" stop-color="#ff2bc1"/><stop offset="0.552" stop-color="#ff0bb8"/><stop offset="0.555" stop-color="#ff00b7"/><stop offset="0.763" stop-color="#ff0072"/><stop offset="1.002" stop-color="#ff002f"/></linearGradient><linearGradient id="g129" gradientUnits="userSpaceOnUse" x1="586" x2="875"><stop offset="0.002" stop-color="#00bcff"/><stop offset="0.251" stop-color="#00a0ff"/><stop offset="0.254" stop-color="#059fff"/><stop offset="0.258" stop-color="#239fff"/><stop offset="0.268" stop-color="#489dff"/><stop offset="0.296" stop-color="#7b98ff"/><stop offset="0.362" stop-color="#c489ff"/><stop offset="0.434" stop-color="#ff70fc"/><stop offset="0.524" stop-color="#ff26c5"/><stop offset="0.538" stop-color="#ff0fbf"/><stop offset="0.545" stop-color="#ff00bc"/><stop offset="0.742" stop-color="#ff0079"/><stop offset="1.002" stop-color="#ff0032"/></linearGradient><linearGradient id="g130" gradientUnits="userSpaceOnUse" x1="586" x2="875"><stop offset="0.002" stop-color="#00b9ff"/><stop offset="0.251" stop-color="#009cff"/><stop offset="0.258" stop-color="#2c9bff"/><stop offset="0.272" stop-color="#5499ff"/><stop offset="0.306" stop-color="#8a92ff"/><stop offset="0.389" stop-color="#dd7cff"/><stop offset="0.434" stop-color="#ff6afc"/><stop offset="0.514" stop-color="#ff24cb"/><stop offset="0.528" stop-color="#ff0bc4"/><stop offset="0.531" stop-color="#ff00c3"/><stop offset="0.715" stop-color="#ff0082"/><stop offset="1.002" stop-color="#ff0034"/></linearGradient><linearGradient id="g131" gradientUnits="userSpaceOnUse" x1="586" x2="875"><stop offset="0.002" stop-color="#00b7ff"/><stop offset="0.247" stop-color="#0099ff"/><stop offset="0.251" stop-color="#0998ff"/><stop offset="0.254" stop-color="#2498ff"/><stop offset="0.265" stop-color="#4896ff"/><stop offset="0.292" stop-color="#7a90ff"/><stop offset="0.358" stop-color="#c280ff"/><stop offset="0.434" stop-color="#ff63fd"/><stop offset="0.503" stop-color="#ff23d1"/><stop offset="0.521" stop-color="#ff00c8"/><stop offset="0.694" stop-color="#ff0089"/><stop offset="1.002" stop-color="#ff0037"/></linearGradient><linearGradient id="g132" gradientUnits="userSpaceOnUse" x1="586" x2="875"><stop offset="0.002" stop-color="#00b4ff"/><stop offset="0.247" stop-color="#0095ff"/><stop offset="0.251" stop-color="#1b95ff"/><stop offset="0.258" stop-color="#3993ff"/><stop offset="0.279" stop-color="#678fff"/><stop offset="0.330" stop-color="#a883ff"/><stop offset="0.431" stop-color="#fe5eff"/><stop offset="0.490" stop-color="#ff26d9"/><stop offset="0.503" stop-color="#ff0cd2"/><stop offset="0.507" stop-color="#ff00d0"/><stop offset="0.666" stop-color="#ff0092"/><stop offset="1.002" stop-color="#ff0039"/></linearGradient><linearGradient id="g133" gradientUnits="userSpaceOnUse" x1="586" x2="875"><stop offset="0.002" stop-color="#00b2ff"/><stop offset="0.244" stop-color="#0092ff"/><stop offset="0.247" stop-color="#0c91ff"/><stop offset="0.251" stop-color="#2591ff"/><stop offset="0.261" stop-color="#478fff"/><stop offset="0.292" stop-color="#7d88ff"/><stop offset="0.365" stop-color="#c973ff"/><stop offset="0.434" stop-color="#ff53fd"/><stop offset="0.483" stop-color="#ff1fde"/><stop offset="0.497" stop-color="#ff00d6"/><stop offset="0.649" stop-color="#ff0099"/><stop offset="1.002" stop-color="#ff003b"/></linearGradient><linearGradient id="g134" gradientUnits="userSpaceOnUse" x1="586" x2="875"><stop offset="0.002" stop-color="#00afff"/><stop offset="0.244" stop-color="#008eff"/><stop offset="0.247" stop-color="#1c8dff"/><stop offset="0.254" stop-color="#398cff"/><stop offset="0.275" stop-color="#6687ff"/><stop offset="0.327" stop-color="#a67aff"/><stop offset="0.424" stop-color="#f952ff"/><stop offset="0.452" stop-color="#ff39f1"/><stop offset="0.476" stop-color="#ff16e2"/><stop offset="0.483" stop-color="#ff00de"/><stop offset="0.625" stop-color="#ff00a1"/><stop offset="1.002" stop-color="#ff003d"/></linearGradient><linearGradient id="g135" gradientUnits="userSpaceOnUse" x1="586" x2="875"><stop offset="0.002" stop-color="#00acff"/><stop offset="0.240" stop-color="#008bff"/><stop offset="0.251" stop-color="#3489ff"/><stop offset="0.272" stop-color="#6384ff"/><stop offset="0.320" stop-color="#a077ff"/><stop offset="0.413" stop-color="#f14fff"/><stop offset="0.438" stop-color="#ff3cfb"/><stop offset="0.462" stop-color="#ff1aeb"/><stop offset="0.472" stop-color="#ff00e5"/><stop offset="0.607" stop-color="#ff00a8"/><stop offset="0.905" stop-color="#ff0057"/><stop offset="1.002" stop-color="#ff003f"/></linearGradient><linearGradient id="g136" gradientUnits="userSpaceOnUse" x1="586" x2="875"><stop offset="0.002" stop-color="#00aaff"/><stop offset="0.240" stop-color="#0087ff"/><stop offset="0.244" stop-color="#1d86ff"/><stop offset="0.254" stop-color="#4384ff"/><stop offset="0.282" stop-color="#757dff"/><stop offset="0.348" stop-color="#bb68ff"/><stop offset="0.420" stop-color="#f641ff"/><stop offset="0.445" stop-color="#ff24f7"/><stop offset="0.455" stop-color="#ff0df0"/><stop offset="0.458" stop-color="#ff00ed"/><stop offset="0.583" stop-color="#ff00b2"/><stop offset="0.829" stop-color="#ff006b"/><stop offset="1.002" stop-color="#ff0040"/></linearGradient><linearGradient id="g137" gradientUnits="userSpaceOnUse" x1="586" x2="875"><stop offset="0.002" stop-color="#00a7ff"/><stop offset="0.237" stop-color="#0084ff"/><stop offset="0.247" stop-color="#3481ff"/><stop offset="0.268" stop-color="#627cff"/><stop offset="0.320" stop-color="#a26dff"/><stop offset="0.403" stop-color="#e944ff"/><stop offset="0.434" stop-color="#ff22fe"/><stop offset="0.448" stop-color="#ff00f5"/><stop offset="0.566" stop-color="#ff00b9"/><stop offset="0.791" stop-color="#ff0075"/><stop offset="1.002" stop-color="#ff0042"/></linearGradient><linearGradient id="g138" gradientUnits="userSpaceOnUse" x1="586" x2="875"><stop offset="0.002" stop-color="#00a5ff"/><stop offset="0.237" stop-color="#007fff"/><stop offset="0.240" stop-color="#1e7fff"/><stop offset="0.251" stop-color="#437cff"/><stop offset="0.279" stop-color="#7475ff"/><stop offset="0.344" stop-color="#b95dff"/><stop offset="0.407" stop-color="#eb36ff"/><stop offset="0.427" stop-color="#fb18ff"/><stop offset="0.434" stop-color="#ff00fe"/><stop offset="0.542" stop-color="#ff00c4"/><stop offset="0.739" stop-color="#ff0083"/><stop offset="1.002" stop-color="#ff0044"/></linearGradient><linearGradient id="g139" gradientUnits="userSpaceOnUse" x1="586" x2="875"><stop offset="0.002" stop-color="#00a2ff"/><stop offset="0.234" stop-color="#007cff"/><stop offset="0.240" stop-color="#277aff"/><stop offset="0.254" stop-color="#4e77ff"/><stop offset="0.292" stop-color="#876bff"/><stop offset="0.375" stop-color="#d344ff"/><stop offset="0.410" stop-color="#ee21ff"/><stop offset="0.424" stop-color="#f800ff"/><stop offset="0.445" stop-color="#ff00f7"/><stop offset="0.562" stop-color="#ff00bc"/><stop offset="0.784" stop-color="#ff0079"/><stop offset="1.002" stop-color="#ff0046"/></linearGradient><linearGradient id="g140" gradientUnits="userSpaceOnUse" x1="586" x2="875"><stop offset="0.002" stop-color="#009fff"/><stop offset="0.234" stop-color="#0178ff"/><stop offset="0.237" stop-color="#1f77ff"/><stop offset="0.247" stop-color="#4374ff"/><stop offset="0.275" stop-color="#736cff"/><stop offset="0.341" stop-color="#b751ff"/><stop offset="0.389" stop-color="#de2dff"/><stop offset="0.403" stop-color="#e917ff"/><stop offset="0.410" stop-color="#ee00ff"/><stop offset="0.441" stop-color="#ff00fa"/><stop offset="0.555" stop-color="#ff00bf"/><stop offset="0.770" stop-color="#ff007d"/><stop offset="1.002" stop-color="#ff0047"/></linearGradient><linearGradient id="g141" gradientUnits="userSpaceOnUse" x1="586" x2="875"><stop offset="0.002" stop-color="#009dff"/><stop offset="0.227" stop-color="#0075ff"/><stop offset="0.230" stop-color="#0074ff"/><stop offset="0.237" stop-color="#2872ff"/><stop offset="0.251" stop-color="#4e6eff"/><stop offset="0.289" stop-color="#8662ff"/><stop offset="0.362" stop-color="#c93bff"/><stop offset="0.389" stop-color="#de1aff"/><stop offset="0.400" stop-color="#e600ff"/><stop offset="0.438" stop-color="#ff00fd"/><stop offset="0.552" stop-color="#ff00c1"/><stop offset="0.763" stop-color="#ff0080"/><stop offset="1.002" stop-color="#ff0049"/></linearGradient><linearGradient id="g142" gradientUnits="userSpaceOnUse" x1="586" x2="875"><stop offset="0.002" stop-color="#009aff"/><stop offset="0.223" stop-color="#0072ff"/><stop offset="0.230" stop-color="#0470ff"/><stop offset="0.234" stop-color="#206fff"/><stop offset="0.244" stop-color="#436cff"/><stop offset="0.275" stop-color="#7761ff"/><stop offset="0.348" stop-color="#be3bff"/><stop offset="0.375" stop-color="#d41dff"/><stop offset="0.386" stop-color="#dc00ff"/><stop offset="0.438" stop-color="#ff00fd"/><stop offset="0.552" stop-color="#ff00c2"/><stop offset="0.763" stop-color="#ff0081"/><stop offset="1.002" stop-color="#ff004a"/></linearGradient><linearGradient id="g143" gradientUnits="userSpaceOnUse" x1="586" x2="875"><stop offset="0.002" stop-color="#0097ff"/><stop offset="0.216" stop-color="#006fff"/><stop offset="0.227" stop-color="#006cff"/><stop offset="0.234" stop-color="#286aff"/><stop offset="0.247" stop-color="#4e66ff"/><stop offset="0.285" stop-color="#8557ff"/><stop offset="0.348" stop-color="#bf30ff"/><stop offset="0.369" stop-color="#cf11ff"/><stop offset="0.375" stop-color="#d400ff"/><stop offset="0.441" stop-color="#ff00fb"/><stop offset="0.559" stop-color="#ff00c0"/><stop offset="0.777" stop-color="#ff007f"/><stop offset="1.002" stop-color="#ff004c"/></linearGradient><linearGradient id="g144" gradientUnits="userSpaceOnUse" x1="586" x2="875"><stop offset="0.002" stop-color="#0094ff"/><stop offset="0.213" stop-color="#006cff"/><stop offset="0.223" stop-color="#0069ff"/><stop offset="0.227" stop-color="#0767ff"/><stop offset="0.230" stop-color="#2166ff"/><stop offset="0.240" stop-color="#4263ff"/><stop offset="0.272" stop-color="#7657ff"/><stop offset="0.334" stop-color="#b431ff"/><stop offset="0.355" stop-color="#c515ff"/><stop offset="0.362" stop-color="#ca00ff"/><stop offset="0.441" stop-color="#ff00fb"/><stop offset="0.559" stop-color="#ff00c0"/><stop offset="0.780" stop-color="#ff007f"/><stop offset="1.002" stop-color="#ff004d"/></linearGradient><linearGradient id="g145" gradientUnits="userSpaceOnUse" x1="586" x2="875"><stop offset="0.002" stop-color="#0092ff"/><stop offset="0.206" stop-color="#0069ff"/><stop offset="0.223" stop-color="#0064ff"/><stop offset="0.230" stop-color="#2961ff"/><stop offset="0.244" stop-color="#4d5cff"/><stop offset="0.282" stop-color="#844cff"/><stop offset="0.330" stop-color="#b227ff"/><stop offset="0.344" stop-color="#bd10ff"/><stop offset="0.348" stop-color="#c004ff"/><stop offset="0.441" stop-color="#ff00fb"/><stop offset="0.562" stop-color="#ff00c0"/><stop offset="0.787" stop-color="#ff007e"/><stop offset="1.002" stop-color="#ff004e"/></linearGradient><linearGradient id="g146" gradientUnits="userSpaceOnUse" x1="586" x2="875"><stop offset="0.002" stop-color="#008fff"/><stop offset="0.199" stop-color="#0067ff"/><stop offset="0.220" stop-color="#0060ff"/><stop offset="0.223" stop-color="#0a5fff"/><stop offset="0.227" stop-color="#225dff"/><stop offset="0.240" stop-color="#4a58ff"/><stop offset="0.275" stop-color="#7d48ff"/><stop offset="0.320" stop-color="#aa25ff"/><stop offset="0.334" stop-color="#b50aff"/><stop offset="0.337" stop-color="#b800ff"/><stop offset="0.441" stop-color="#ff00fc"/><stop offset="0.562" stop-color="#ff00c0"/><stop offset="0.787" stop-color="#ff007f"/><stop offset="1.002" stop-color="#ff0050"/></linearGradient><linearGradient id="g147" gradientUnits="userSpaceOnUse" x1="586" x2="875"><stop offset="0.002" stop-color="#008cff"/><stop offset="0.196" stop-color="#0063ff"/><stop offset="0.220" stop-color="#005aff"/><stop offset="0.223" stop-color="#1959ff"/><stop offset="0.234" stop-color="#3e55ff"/><stop offset="0.261" stop-color="#6e48ff"/><stop offset="0.306" stop-color="#9e26ff"/><stop offset="0.320" stop-color="#aa0fff"/><stop offset="0.324" stop-color="#ad03ff"/><stop offset="0.438" stop-color="#ff00fe"/><stop offset="0.559" stop-color="#ff00c2"/><stop offset="0.780" stop-color="#ff0081"/><stop offset="1.002" stop-color="#ff0051"/></linearGradient><linearGradient id="g148" gradientUnits="userSpaceOnUse" x1="586" x2="875"><stop offset="0.002" stop-color="#0089ff"/><stop offset="0.189" stop-color="#0060ff"/><stop offset="0.216" stop-color="#0056ff"/><stop offset="0.220" stop-color="#0d55ff"/><stop offset="0.223" stop-color="#2353ff"/><stop offset="0.237" stop-color="#4a4dff"/><stop offset="0.275" stop-color="#8037ff"/><stop offset="0.303" stop-color="#9c1aff"/><stop offset="0.313" stop-color="#a500ff"/><stop offset="0.438" stop-color="#ff00fe"/><stop offset="0.559" stop-color="#ff00c3"/><stop offset="0.780" stop-color="#ff0082"/><stop offset="1.002" stop-color="#ff0052"/></linearGradient><linearGradient id="g149" gradientUnits="userSpaceOnUse" x1="586" x2="875"><stop offset="0.002" stop-color="#0086ff"/><stop offset="0.182" stop-color="#005eff"/><stop offset="0.216" stop-color="#0050ff"/><stop offset="0.220" stop-color="#1b4fff"/><stop offset="0.230" stop-color="#3e4aff"/><stop offset="0.258" stop-color="#6d3aff"/><stop offset="0.289" stop-color="#901cff"/><stop offset="0.299" stop-color="#9a03ff"/><stop offset="0.427" stop-color="#f900ff"/><stop offset="0.455" stop-color="#ff00f4"/><stop offset="0.590" stop-color="#ff00b8"/><stop offset="0.846" stop-color="#ff0074"/><stop offset="1.002" stop-color="#ff0054"/></linearGradient><linearGradient id="g150" gradientUnits="userSpaceOnUse" x1="586" x2="875"><stop offset="0.002" stop-color="#0083ff"/><stop offset="0.178" stop-color="#005aff"/><stop offset="0.213" stop-color="#004cff"/><stop offset="0.223" stop-color="#3047ff"/><stop offset="0.244" stop-color="#5c3bff"/><stop offset="0.279" stop-color="#8719ff"/><stop offset="0.289" stop-color="#9100ff"/><stop offset="0.403" stop-color="#e900ff"/><stop offset="0.445" stop-color="#ff00fa"/><stop offset="0.573" stop-color="#ff00bf"/><stop offset="0.811" stop-color="#ff007d"/><stop offset="1.002" stop-color="#ff0055"/></linearGradient><linearGradient id="g151" gradientUnits="userSpaceOnUse" x1="586" x2="875"><stop offset="0.002" stop-color="#0080ff"/><stop offset="0.171" stop-color="#0057ff"/><stop offset="0.213" stop-color="#0045ff"/><stop offset="0.216" stop-color="#1c43ff"/><stop offset="0.227" stop-color="#3e3dff"/><stop offset="0.258" stop-color="#7124ff"/><stop offset="0.272" stop-color="#810eff"/><stop offset="0.275" stop-color="#8402ff"/><stop offset="0.372" stop-color="#d400ff"/><stop offset="0.441" stop-color="#ff00fd"/><stop offset="0.566" stop-color="#ff00c2"/><stop offset="0.798" stop-color="#ff0081"/><stop offset="1.002" stop-color="#ff0056"/></linearGradient><linearGradient id="g152" gradientUnits="userSpaceOnUse" x1="586" x2="875"><stop offset="0.002" stop-color="#007dff"/><stop offset="0.164" stop-color="#0054ff"/><stop offset="0.209" stop-color="#0040ff"/><stop offset="0.220" stop-color="#303aff"/><stop offset="0.240" stop-color="#5b29ff"/><stop offset="0.258" stop-color="#7211ff"/><stop offset="0.265" stop-color="#7a00ff"/><stop offset="0.351" stop-color="#c500ff"/><stop offset="0.441" stop-color="#ff00fd"/><stop offset="0.569" stop-color="#ff00c1"/><stop offset="0.804" stop-color="#ff0080"/><stop offset="1.002" stop-color="#ff0057"/></linearGradient><linearGradient id="g153" gradientUnits="userSpaceOnUse" x1="586" x2="875"><stop offset="0.002" stop-color="#007aff"/><stop offset="0.157" stop-color="#0052ff"/><stop offset="0.209" stop-color="#0038ff"/><stop offset="0.213" stop-color="#1d35ff"/><stop offset="0.223" stop-color="#3e2dff"/><stop offset="0.244" stop-color="#6215ff"/><stop offset="0.251" stop-color="#6c02ff"/><stop offset="0.320" stop-color="#ae00ff"/><stop offset="0.441" stop-color="#ff00fd"/><stop offset="0.569" stop-color="#ff00c2"/><stop offset="0.804" stop-color="#ff0081"/><stop offset="1.002" stop-color="#ff0058"/></linearGradient><linearGradient id="g154" gradientUnits="userSpaceOnUse" x1="586" x2="875"><stop offset="0.002" stop-color="#0077ff"/><stop offset="0.154" stop-color="#004dff"/><stop offset="0.206" stop-color="#0031ff"/><stop offset="0.213" stop-color="#252bff"/><stop offset="0.227" stop-color="#491cff"/><stop offset="0.240" stop-color="#6000ff"/><stop offset="0.299" stop-color="#9e00ff"/><stop offset="0.438" stop-color="#ff00ff"/><stop offset="0.569" stop-color="#ff00c2"/><stop offset="0.804" stop-color="#ff0082"/><stop offset="1.002" stop-color="#ff0059"/></linearGradient><linearGradient id="g155" gradientUnits="userSpaceOnUse" x1="586" x2="875"><stop offset="0.002" stop-color="#0074ff"/><stop offset="0.147" stop-color="#004bff"/><stop offset="0.206" stop-color="#0326ff"/><stop offset="0.209" stop-color="#1e22ff"/><stop offset="0.220" stop-color="#3e14ff"/><stop offset="0.227" stop-color="#4c02ff"/><stop offset="0.268" stop-color="#8200ff"/><stop offset="0.365" stop-color="#d000ff"/><stop offset="0.445" stop-color="#ff00fb"/><stop offset="0.576" stop-color="#ff00c0"/><stop offset="0.822" stop-color="#ff007f"/><stop offset="1.002" stop-color="#ff005b"/></linearGradient><linearGradient id="g156" gradientUnits="userSpaceOnUse" x1="586" x2="875"><stop offset="0.002" stop-color="#0070ff"/><stop offset="0.140" stop-color="#0048ff"/><stop offset="0.196" stop-color="#0024ff"/><stop offset="0.202" stop-color="#001cff"/><stop offset="0.209" stop-color="#2510ff"/><stop offset="0.216" stop-color="#3a00ff"/><stop offset="0.244" stop-color="#6800ff"/><stop offset="0.313" stop-color="#ab00ff"/><stop offset="0.441" stop-color="#ff00fe"/><stop offset="0.573" stop-color="#ff00c2"/><stop offset="0.815" stop-color="#ff0081"/><stop offset="1.002" stop-color="#ff005c"/></linearGradient><linearGradient id="g157" gradientUnits="userSpaceOnUse" x1="586" x2="875"><stop offset="0.002" stop-color="#006dff"/><stop offset="0.133" stop-color="#0045ff"/><stop offset="0.185" stop-color="#0022ff"/><stop offset="0.199" stop-color="#000cff"/><stop offset="0.202" stop-color="#0601ff"/><stop offset="0.206" stop-color="#1f00ff"/><stop offset="0.220" stop-color="#4500ff"/><stop offset="0.258" stop-color="#7a00ff"/><stop offset="0.348" stop-color="#c500ff"/><stop offset="0.445" stop-color="#ff00fc"/><stop offset="0.580" stop-color="#ff00c0"/><stop offset="0.829" stop-color="#ff007f"/><stop offset="1.002" stop-color="#ff005d"/></linearGradient><linearGradient id="g158" gradientUnits="userSpaceOnUse" x1="586" x2="875"><stop offset="0.002" stop-color="#006aff"/><stop offset="0.126" stop-color="#0042ff"/><stop offset="0.175" stop-color="#001fff"/><stop offset="0.192" stop-color="#0000ff"/><stop offset="0.199" stop-color="#0000ff"/><stop offset="0.206" stop-color="#2600ff"/><stop offset="0.223" stop-color="#4f00ff"/><stop offset="0.268" stop-color="#8600ff"/><stop offset="0.375" stop-color="#d700ff"/><stop offset="0.445" stop-color="#ff00fc"/><stop offset="0.580" stop-color="#ff00c1"/><stop offset="0.829" stop-color="#ff0080"/><stop offset="1.002" stop-color="#ff005e"/></linearGradient><linearGradient id="g159" gradientUnits="userSpaceOnUse" x1="586" x2="875"><stop offset="0.002" stop-color="#0066ff"/><stop offset="0.119" stop-color="#003eff"/><stop offset="0.164" stop-color="#001dff"/><stop offset="0.178" stop-color="#0001ff"/><stop offset="0.196" stop-color="#0000ff"/><stop offset="0.199" stop-color="#0900ff"/><stop offset="0.202" stop-color="#1f00ff"/><stop offset="0.216" stop-color="#4500ff"/><stop offset="0.254" stop-color="#7900ff"/><stop offset="0.344" stop-color="#c300ff"/><stop offset="0.445" stop-color="#ff00fc"/><stop offset="0.580" stop-color="#ff00c1"/><stop offset="0.832" stop-color="#ff0080"/><stop offset="1.002" stop-color="#ff005f"/></linearGradient><linearGradient id="g160" gradientUnits="userSpaceOnUse" x1="586" x2="875"><stop offset="0.002" stop-color="#0062ff"/><stop offset="0.112" stop-color="#003bff"/><stop offset="0.154" stop-color="#001aff"/><stop offset="0.168" stop-color="#0000ff"/><stop offset="0.196" stop-color="#0000ff"/><stop offset="0.202" stop-color="#2700ff"/><stop offset="0.220" stop-color="#4f00ff"/><stop offset="0.265" stop-color="#8500ff"/><stop offset="0.372" stop-color="#d600ff"/><stop offset="0.445" stop-color="#ff00fd"/><stop offset="0.583" stop-color="#ff00c1"/><stop offset="0.839" stop-color="#ff007f"/><stop offset="1.002" stop-color="#ff0060"/></linearGradient><linearGradient id="g161" gradientUnits="userSpaceOnUse" x1="586" x2="875"><stop offset="0.002" stop-color="#005fff"/><stop offset="0.106" stop-color="#0038ff"/><stop offset="0.144" stop-color="#0017ff"/><stop offset="0.154" stop-color="#0001ff"/><stop offset="0.192" stop-color="#0000ff"/><stop offset="0.196" stop-color="#0b00ff"/><stop offset="0.199" stop-color="#2000ff"/><stop offset="0.213" stop-color="#4500ff"/><stop offset="0.251" stop-color="#7900ff"/><stop offset="0.341" stop-color="#c100ff"/><stop offset="0.445" stop-color="#ff00fd"/><stop offset="0.583" stop-color="#ff00c1"/><stop offset="0.839" stop-color="#ff0080"/><stop offset="1.002" stop-color="#ff0061"/></linearGradient><linearGradient id="g162" gradientUnits="userSpaceOnUse" x1="586" x2="875"><stop offset="0.002" stop-color="#005bff"/><stop offset="0.099" stop-color="#0034ff"/><stop offset="0.133" stop-color="#0015ff"/><stop offset="0.144" stop-color="#0000ff"/><stop offset="0.192" stop-color="#0000ff"/><stop offset="0.196" stop-color="#1800ff"/><stop offset="0.206" stop-color="#3a00ff"/><stop offset="0.237" stop-color="#6b00ff"/><stop offset="0.313" stop-color="#af00ff"/><stop offset="0.445" stop-color="#ff00fd"/><stop offset="0.583" stop-color="#ff00c2"/><stop offset="0.839" stop-color="#ff0081"/><stop offset="1.002" stop-color="#ff0062"/></linearGradient><linearGradient id="g163" gradientUnits="userSpaceOnUse" x1="586" x2="875"><stop offset="0.002" stop-color="#0056ff"/><stop offset="0.092" stop-color="#0030ff"/><stop offset="0.123" stop-color="#0011ff"/><stop offset="0.130" stop-color="#0001ff"/><stop offset="0.189" stop-color="#0000ff"/><stop offset="0.199" stop-color="#2d00ff"/><stop offset="0.220" stop-color="#5600ff"/><stop offset="0.272" stop-color="#8f00ff"/><stop offset="0.396" stop-color="#e500ff"/><stop offset="0.448" stop-color="#ff00fb"/><stop offset="0.590" stop-color="#ff00c0"/><stop offset="0.853" stop-color="#ff007f"/><stop offset="1.002" stop-color="#ff0063"/></linearGradient><linearGradient id="g164" gradientUnits="userSpaceOnUse" x1="586" x2="875"><stop offset="0.002" stop-color="#0052ff"/><stop offset="0.085" stop-color="#002cff"/><stop offset="0.112" stop-color="#000eff"/><stop offset="0.119" stop-color="#0000ff"/><stop offset="0.189" stop-color="#0000ff"/><stop offset="0.192" stop-color="#1900ff"/><stop offset="0.202" stop-color="#3a00ff"/><stop offset="0.234" stop-color="#6a00ff"/><stop offset="0.310" stop-color="#ad00ff"/><stop offset="0.445" stop-color="#ff00fd"/><stop offset="0.587" stop-color="#ff00c2"/><stop offset="0.849" stop-color="#ff0080"/><stop offset="1.002" stop-color="#ff0064"/></linearGradient><linearGradient id="g165" gradientUnits="userSpaceOnUse" x1="586" x2="875"><stop offset="0.002" stop-color="#004eff"/><stop offset="0.078" stop-color="#0028ff"/><stop offset="0.099" stop-color="#0011ff"/><stop offset="0.106" stop-color="#0000ff"/><stop offset="0.185" stop-color="#0000ff"/><stop offset="0.196" stop-color="#2d00ff"/><stop offset="0.216" stop-color="#5600ff"/><stop offset="0.272" stop-color="#9100ff"/><stop offset="0.403" stop-color="#e900ff"/><stop offset="0.448" stop-color="#ff00fc"/><stop offset="0.593" stop-color="#ff00c0"/><stop offset="0.863" stop-color="#ff007e"/><stop offset="1.002" stop-color="#ff0065"/></linearGradient><linearGradient id="g166" gradientUnits="userSpaceOnUse" x1="586" x2="875"><stop offset="0.002" stop-color="#0049ff"/><stop offset="0.067" stop-color="#0026ff"/><stop offset="0.088" stop-color="#000dff"/><stop offset="0.095" stop-color="#0000ff"/><stop offset="0.185" stop-color="#0000ff"/><stop offset="0.189" stop-color="#1a00ff"/><stop offset="0.199" stop-color="#3a00ff"/><stop offset="0.230" stop-color="#6a00ff"/><stop offset="0.306" stop-color="#ac00ff"/><stop offset="0.445" stop-color="#ff00fe"/><stop offset="0.587" stop-color="#ff00c3"/><stop offset="0.849" stop-color="#ff0082"/><stop offset="1.002" stop-color="#ff0065"/></linearGradient><linearGradient id="g167" gradientUnits="userSpaceOnUse" x1="586" x2="875"><stop offset="0.002" stop-color="#0044ff"/><stop offset="0.061" stop-color="#0021ff"/><stop offset="0.078" stop-color="#0009ff"/><stop offset="0.081" stop-color="#0000ff"/><stop offset="0.182" stop-color="#0000ff"/><stop offset="0.192" stop-color="#2e00ff"/><stop offset="0.213" stop-color="#5600ff"/><stop offset="0.268" stop-color="#9000ff"/><stop offset="0.400" stop-color="#e700ff"/><stop offset="0.448" stop-color="#ff00fc"/><stop offset="0.597" stop-color="#ff00c0"/><stop offset="0.870" stop-color="#ff007f"/><stop offset="1.002" stop-color="#ff0066"/></linearGradient><linearGradient id="g168" gradientUnits="userSpaceOnUse" x1="586" x2="875"><stop offset="0.002" stop-color="#003eff"/><stop offset="0.054" stop-color="#001cff"/><stop offset="0.071" stop-color="#0000ff"/><stop offset="0.182" stop-color="#0200ff"/><stop offset="0.185" stop-color="#1b00ff"/><stop offset="0.199" stop-color="#4200ff"/><stop offset="0.237" stop-color="#7400ff"/><stop offset="0.327" stop-color="#bb00ff"/><stop offset="0.448" stop-color="#ff00fc"/><stop offset="0.597" stop-color="#ff00c0"/><stop offset="0.870" stop-color="#ff007f"/><stop offset="1.002" stop-color="#ff0067"/></linearGradient><linearGradient id="g169" gradientUnits="userSpaceOnUse" x1="586" x2="875"><stop offset="0.002" stop-color="#003aff"/><stop offset="0.047" stop-color="#001bff"/><stop offset="0.064" stop-color="#0000ff"/><stop offset="0.178" stop-color="#0000ff"/><stop offset="0.189" stop-color="#2c00ff"/><stop offset="0.209" stop-color="#5400ff"/><stop offset="0.265" stop-color="#8e00ff"/><stop offset="0.396" stop-color="#e500ff"/><stop offset="0.452" stop-color="#ff00fb"/><stop offset="0.604" stop-color="#ff00bf"/><stop offset="0.888" stop-color="#ff007d"/><stop offset="1.002" stop-color="#ff0068"/></linearGradient></defs><g clip-path="url(#hs)" opacity="0.7"><rect x="586" y="404" width="289" height="2" fill="url(#g0)"/><rect x="586" y="406" width="289" height="2" fill="url(#g1)"/><rect x="586" y="408" width="289" height="2" fill="url(#g2)"/><rect x="586" y="410" width="289" height="2" fill="url(#g3)"/><rect x="586" y="412" width="289" height="2" fill="url(#g4)"/><rect x="586" y="414" width="289" height="2" fill="url(#g5)"/><rect x="586" y="416" width="289" height="2" fill="url(#g6)"/><rect x="586" y="418" width="289" height="2" fill="url(#g7)"/><rect x="586" y="420" width="289" height="2" fill="url(#g8)"/><rect x="586" y="422" width="289" height="2" fill="url(#g9)"/><rect x="586" y="424" width="289" height="2" fill="url(#g10)"/><rect x="586" y="426" width="289" height="2" fill="url(#g11)"/><rect x="586" y="428" width="289" height="2" fill="url(#g12)"/><rect x="586" y="430" width="289" height="2" fill="url(#g13)"/><rect x="586" y="432" width="289" height="2" fill="url(#g14)"/><rect x="586" y="434" width="289" height="2" fill="url(#g15)"/><rect x="586" y="436" width="289" height="2" fill="url(#g16)"/><rect x="586" y="438" width="289" height="2" fill="url(#g17)"/><rect x="586" y="440" width="289" height="2" fill="url(#g18)"/><rect x="586" y="442" width="289" height="2" fill="url(#g19)"/><rect x="586" y="444" width="289" height="2" fill="url(#g20)"/><rect x="586" y="446" width="289" height="2" fill="url(#g21)"/><rect x="586" y="448" width="289" height="2" fill="url(#g22)"/><rect x="586" y="450" width="289" height="2" fill="url(#g23)"/><rect x="586" y="452" width="289" height="2" fill="url(#g24)"/><rect x="586" y="454" width="289" height="2" fill="url(#g25)"/><rect x="586" y="456" width="289" height="2" fill="url(#g26)"/><rect x="586" y="458" width="289" height="2" fill="url(#g27)"/><rect x="586" y="460" width="289" height="2" fill="url(#g28)"/><rect x="586" y="462" width="289" height="2" fill="url(#g29)"/><rect x="586" y="464" width="289" height="2" fill="url(#g30)"/><rect x="586" y="466" width="289" height="2" fill="url(#g31)"/><rect x="586" y="468" width="289" height="2" fill="url(#g32)"/><rect x="586" y="470" width="289" height="2" fill="url(#g33)"/><rect x="586" y="472" width="289" height="2" fill="url(#g34)"/><rect x="586" y="474" width="289" height="2" fill="url(#g35)"/><rect x="586" y="476" width="289" height="2" fill="url(#g36)"/><rect x="586" y="478" width="289" height="2" fill="url(#g37)"/><rect x="586" y="480" width="289" height="2" fill="url(#g38)"/><rect x="586" y="482" width="289" height="2" fill="url(#g39)"/><rect x="586" y="484" width="289" height="2" fill="url(#g40)"/><rect x="586" y="486" width="289" height="2" fill="url(#g41)"/><rect x="586" y="488" width="289" height="2" fill="url(#g42)"/><rect x="586" y="490" width="289" height="2" fill="url(#g43)"/><rect x="586" y="492" width="289" height="2" fill="url(#g44)"/><rect x="586" y="494" width="289" height="2" fill="url(#g45)"/><rect x="586" y="496" width="289" height="2" fill="url(#g46)"/><rect x="586" y="498" width="289" height="2" fill="url(#g47)"/><rect x="586" y="500" width="289" height="2" fill="url(#g48)"/><rect x="586" y="502" width="289" height="2" fill="url(#g49)"/><rect x="586" y="504" width="289" height="2" fill="url(#g50)"/><rect x="586" y="506" width="289" height="2" fill="url(#g51)"/><rect x="586" y="508" width="289" height="2" fill="url(#g52)"/><rect x="586" y="510" width="289" height="2" fill="url(#g53)"/><rect x="586" y="512" width="289" height="2" fill="url(#g54)"/><rect x="586" y="514" width="289" height="2" fill="url(#g55)"/><rect x="586" y="516" width="289" height="2" fill="url(#g56)"/><rect x="586" y="518" width="289" height="2" fill="url(#g57)"/><rect x="586" y="520" width="289" height="2" fill="url(#g58)"/><rect x="586" y="522" width="289" height="2" fill="url(#g59)"/><rect x="586" y="524" width="289" height="2" fill="url(#g60)"/><rect x="586" y="526" width="289" height="2" fill="url(#g61)"/><rect x="586" y="528" width="289" height="2" fill="url(#g62)"/><rect x="586" y="530" width="289" height="2" fill="url(#g63)"/><rect x="586" y="532" width="289" height="2" fill="url(#g64)"/><rect x="586" y="534" width="289" height="2" fill="url(#g65)"/><rect x="586" y="536" width="289" height="2" fill="url(#g66)"/><rect x="586" y="538" width="289" height="2" fill="url(#g67)"/><rect x="586" y="540" width="289" height="2" fill="url(#g68)"/><rect x="586" y="542" width="289" height="2" fill="url(#g69)"/><rect x="586" y="544" width="289" height="2" fill="url(#g70)"/><rect x="586" y="546" width="289" height="2" fill="url(#g71)"/><rect x="586" y="548" width="289" height="2" fill="url(#g72)"/><rect x="586" y="550" width="289" height="2" fill="url(#g73)"/><rect x="586" y="552" width="289" height="2" fill="url(#g74)"/><rect x="586" y="554" width="289" height="2" fill="url(#g75)"/><rect x="586" y="556" width="289" height="2" fill="url(#g76)"/><rect x="586" y="558" width="289" height="2" fill="url(#g77)"/><rect x="586" y="560" width="289" height="2" fill="url(#g78)"/><rect x="586" y="562" width="289" height="2" fill="url(#g79)"/><rect x="586" y="564" width="289" height="2" fill="url(#g80)"/><rect x="586" y="566" width="289" height="2" fill="url(#g81)"/><rect x="586" y="568" width="289" height="2" fill="url(#g82)"/><rect x="586" y="570" width="289" height="2" fill="url(#g83)"/><rect x="586" y="572" width="289" height="2" fill="url(#g84)"/><rect x="586" y="574" width="289" height="2" fill="url(#g85)"/><rect x="586" y="576" width="289" height="2" fill="url(#g86)"/><rect x="586" y="578" width="289" height="2" fill="url(#g87)"/><rect x="586" y="580" width="289" height="2" fill="url(#g88)"/><rect x="586" y="582" width="289" height="2" fill="url(#g89)"/><rect x="586" y="584" width="289" height="2" fill="url(#g90)"/><rect x="586" y="586" width="289" height="2" fill="url(#g91)"/><rect x="586" y="588" width="289" height="2" fill="url(#g92)"/><rect x="586" y="590" width="289" height="2" fill="url(#g93)"/><rect x="586" y="592" width="289" height="2" fill="url(#g94)"/><rect x="586" y="594" width="289" height="2" fill="url(#g95)"/><rect x="586" y="596" width="289" height="2" fill="url(#g96)"/><rect x="586" y="598" width="289" height="2" fill="url(#g97)"/><rect x="586" y="600" width="289" height="2" fill="url(#g98)"/><rect x="586" y="602" width="289" height="2" fill="url(#g99)"/><rect x="586" y="604" width="289" height="2" fill="url(#g100)"/><rect x="586" y="606" width="289" height="2" fill="url(#g101)"/><rect x="586" y="608" width="289" height="2" fill="url(#g102)"/><rect x="586" y="610" width="289" height="2" fill="url(#g103)"/><rect x="586" y="612" width="289" height="2" fill="url(#g104)"/><rect x="586" y="614" width="289" height="2" fill="url(#g105)"/><rect x="586" y="616" width="289" height="2" fill="url(#g106)"/><rect x="586" y="618" width="289" height="2" fill="url(#g107)"/><rect x="586" y="620" width="289" height="2" fill="url(#g108)"/><rect x="586" y="622" width="289" height="2" fill="url(#g109)"/><rect x="586" y="624" width="289" height="2" fill="url(#g110)"/><rect x="586" y="626" width="289" height="2" fill="url(#g111)"/><rect x="586" y="628" width="289" height="2" fill="url(#g112)"/><rect x="586" y="630" width="289" height="2" fill="url(#g113)"/><rect x="586" y="632" width="289" height="2" fill="url(#g114)"/><rect x="586" y="634" width="289" height="2" fill="url(#g115)"/><rect x="586" y="636" width="289" height="2" fill="url(#g116)"/><rect x="586" y="638" width="289" height="2" fill="url(#g117)"/><rect x="586" y="640" width="289" height="2" fill="url(#g118)"/><rect x="586" y="642" width="289" height="2" fill="url(#g119)"/><rect x="586" y="644" width="289" height="2" fill="url(#g120)"/><rect x="586" y="646" width="289" height="2" fill="url(#g121)"/><rect x="586" y="648" width="289" height="2" fill="url(#g122)"/><rect x="586" y="650" width="289" height="2" fill="url(#g123)"/><rect x="586" y="652" width="289" height="2" fill="url(#g124)"/><rect x="586" y="654" width="289" height="2" fill="url(#g125)"/><rect x="586" y="656" width="289" height="2" fill="url(#g126)"/><rect x="586" y="658" width="289" height="2" fill="url(#g127)"/><rect x="586" y="660" width="289" height="2" fill="url(#g128)"/><rect x="586" y="662" width="289" height="2" fill="url(#g129)"/><rect x="586" y="664" width="289" height="2" fill="url(#g130)"/><rect x="586" y="666" width="289" height="2" fill="url(#g131)"/><rect x="586" y="668" width="289" height="2" fill="url(#g132)"/><rect x="586" y="670" width="289" height="2" fill="url(#g133)"/><rect x="586" y="672" width="289" height="2" fill="url(#g134)"/><rect x="586" y="674" width="289" height="2" fill="url(#g135)"/><rect x="586" y="676" width="289" height="2" fill="url(#g136)"/><rect x="586" y="678" width="289" height="2" fill="url(#g137)"/><rect x="586" y="680" width="289" height="2" fill="url(#g138)"/><rect x="586" y="682" width="289" height="2" fill="url(#g139)"/><rect x="586" y="684" width="289" height="2" fill="url(#g140)"/><rect x="586" y="686" width="289" height="2" fill="url(#g141)"/><rect x="586" y="688" width="289" height="2" fill="url(#g142)"/><rect x="586" y="690" width="289" height="2" fill="url(#g143)"/><rect x="586" y="692" width="289" height="2" fill="url(#g144)"/><rect x="586" y="694" width="289" height="2" fill="url(#g145)"/><rect x="586" y="696" width="289" height="2" fill="url(#g146)"/><rect x="586" y="698" width="289" height="2" fill="url(#g147)"/><rect x="586" y="700" width="289" height="2" fill="url(#g148)"/><rect x="586" y="702" width="289" height="2" fill="url(#g149)"/><rect x="586" y="704" width="289" height="2" fill="url(#g150)"/><rect x="586" y="706" width="289" height="2" fill="url(#g151)"/><rect x="586" y="708" width="289" height="2" fill="url(#g152)"/><rect x="586" y="710" width="289" height="2" fill="url(#g153)"/><rect x="586" y="712" width="289" height="2" fill="url(#g154)"/><rect x="586" y="714" width="289" height="2" fill="url(#g155)"/><rect x="586" y="716" width="289" height="2" fill="url(#g156)"/><rect x="586" y="718" width="289" height="2" fill="url(#g157)"/><rect x="586" y="720" width="289" height="2" fill="url(#g158)"/><rect x="586" y="722" width="289" height="2" fill="url(#g159)"/><rect x="586" y="724" width="289" height="2" fill="url(#g160)"/><rect x="586" y="726" width="289" height="2" fill="url(#g161)"/><rect x="586" y="728" width="289" height="2" fill="url(#g162)"/><rect x="586" y="730" width="289" height="2" fill="url(#g163)"/><rect x="586" y="732" width="289" height="2" fill="url(#g164)"/><rect x="586" y="734" width="289" height="2" fill="url(#g165)"/><rect x="586" y="736" width="289" height="2" fill="url(#g166)"/><rect x="586" y="738" width="289" height="2" fill="url(#g167)"/><rect x="586" y="740" width="289" height="2" fill="url(#g168)"/><rect x="586" y="742" width="289" height="2" fill="url(#g169)"/></g><line x1="624.7" y1="374.5" x2="624.7" y2="751" stroke="#000" stroke-opacity="0.08" stroke-width="1"/><line x1="663.9" y1="374.5" x2="663.9" y2="751" stroke="#000" stroke-opacity="0.08" stroke-width="1"/><line x1="703.1" y1="374.5" x2="703.1" y2="751" stroke="#000" stroke-opacity="0.08" stroke-width="1"/><line x1="742.3" y1="374.5" x2="742.3" y2="751" stroke="#000" stroke-opacity="0.08" stroke-width="1"/><line x1="781.5" y1="374.5" x2="781.5" y2="751" stroke="#000" stroke-opacity="0.08" stroke-width="1"/><line x1="820.6" y1="374.5" x2="820.6" y2="751" stroke="#000" stroke-opacity="0.08" stroke-width="1"/><line x1="859.8" y1="374.5" x2="859.8" y2="751" stroke="#000" stroke-opacity="0.08" stroke-width="1"/><line x1="899.0" y1="374.5" x2="899.0" y2="751" stroke="#000" stroke-opacity="0.08" stroke-width="1"/><line x1="938.2" y1="374.5" x2="938.2" y2="751" stroke="#000" stroke-opacity="0.08" stroke-width="1"/><line x1="577.5" y1="703.0" x2="947" y2="703.0" stroke="#000" stroke-opacity="0.08" stroke-width="1"/><line x1="577.5" y1="662.5" x2="947" y2="662.5" stroke="#000" stroke-opacity="0.08" stroke-width="1"/><line x1="577.5" y1="622.0" x2="947" y2="622.0" stroke="#000" stroke-opacity="0.08" stroke-width="1"/><line x1="577.5" y1="581.5" x2="947" y2="581.5" stroke="#000" stroke-opacity="0.08" stroke-width="1"/><line x1="577.5" y1="541.0" x2="947" y2="541.0" stroke="#000" stroke-opacity="0.08" stroke-width="1"/><line x1="577.5" y1="500.5" x2="947" y2="500.5" stroke="#000" stroke-opacity="0.08" stroke-width="1"/><line x1="577.5" y1="460.0" x2="947" y2="460.0" stroke="#000" stroke-opacity="0.08" stroke-width="1"/><line x1="577.5" y1="419.5" x2="947" y2="419.5" stroke="#000" stroke-opacity="0.08" stroke-width="1"/><line x1="577.5" y1="379.0" x2="947" y2="379.0" stroke="#000" stroke-opacity="0.08" stroke-width="1"/><line x1="585.5" y1="374.5" x2="585.5" y2="751" stroke="#000" stroke-opacity="0.19" stroke-width="1"/><line x1="577.5" y1="743.5" x2="947" y2="743.5" stroke="#000" stroke-opacity="0.19" stroke-width="1"/><path d="M686.0,639.1 L688.8,635.2 L695.5,626.7 L701.2,620.1 L705.6,615.3 L711.7,609.1 L720.7,601.1 L734.6,590.9 L744.3,585.3 L756.7,579.8 L772.4,576.0 L791.9,576.1 L815.0,584.3 L830.4,594.7 L841.3,603.9" fill="none" stroke="#444" stroke-width="1.1" stroke-dasharray="1.2 3" opacity="0.28"/><text x="576.5" y="746.4" text-anchor="end" font-family="Liberation Sans" font-size="10" fill="#666">0</text><text x="585.5" y="758.8" text-anchor="middle" font-family="Liberation Sans" font-size="10" fill="#666">0</text><text x="576.5" y="705.9" text-anchor="end" font-family="Liberation Sans" font-size="10" fill="#666">0.1</text><text x="624.7" y="758.8" text-anchor="middle" font-family="Liberation Sans" font-size="10" fill="#666">0.1</text><text x="576.5" y="665.4" text-anchor="end" font-family="Liberation Sans" font-size="10" fill="#666">0.2</text><text x="663.9" y="758.8" text-anchor="middle" font-family="Liberation Sans" font-size="10" fill="#666">0.2</text><text x="576.5" y="624.9" text-anchor="end" font-family="Liberation Sans" font-size="10" fill="#666">0.3</text><text x="703.1" y="758.8" text-anchor="middle" font-family="Liberation Sans" font-size="10" fill="#666">0.3</text><text x="576.5" y="584.4" text-anchor="end" font-family="Liberation Sans" font-size="10" fill="#666">0.4</text><text x="742.3" y="758.8" text-anchor="middle" font-family="Liberation Sans" font-size="10" fill="#666">0.4</text><text x="576.5" y="543.9" text-anchor="end" font-family="Liberation Sans" font-size="10" fill="#666">0.5</text><text x="781.5" y="758.8" text-anchor="middle" font-family="Liberation Sans" font-size="10" fill="#666">0.5</text><text x="576.5" y="503.4" text-anchor="end" font-family="Liberation Sans" font-size="10" fill="#666">0.6</text><text x="820.6" y="758.8" text-anchor="middle" font-family="Liberation Sans" font-size="10" fill="#666">0.6</text><text x="576.5" y="462.9" text-anchor="end" font-family="Liberation Sans" font-size="10" fill="#666">0.7</text><text x="859.8" y="758.8" text-anchor="middle" font-family="Liberation Sans" font-size="10" fill="#666">0.7</text><text x="576.5" y="422.4" text-anchor="end" font-family="Liberation Sans" font-size="10" fill="#666">0.8</text><text x="899.0" y="758.8" text-anchor="middle" font-family="Liberation Sans" font-size="10" fill="#666">0.8</text><text x="576.5" y="381.9" text-anchor="end" font-family="Liberation Sans" font-size="10" fill="#666">0.9</text><text x="938.2" y="758.8" text-anchor="middle" font-family="Liberation Sans" font-size="10" fill="#666">0.9</text></svg>
<div class="a" style="left:530px;top:770px;width:441px;height:7px;border-radius:4px;background:#eee;border:1px solid #d9d9d9"></div>
<div class="a" style="left:529.6px;top:767.3px;width:11.8px;height:11.8px;border-radius:50%;background:#777"></div>
</body></html>
